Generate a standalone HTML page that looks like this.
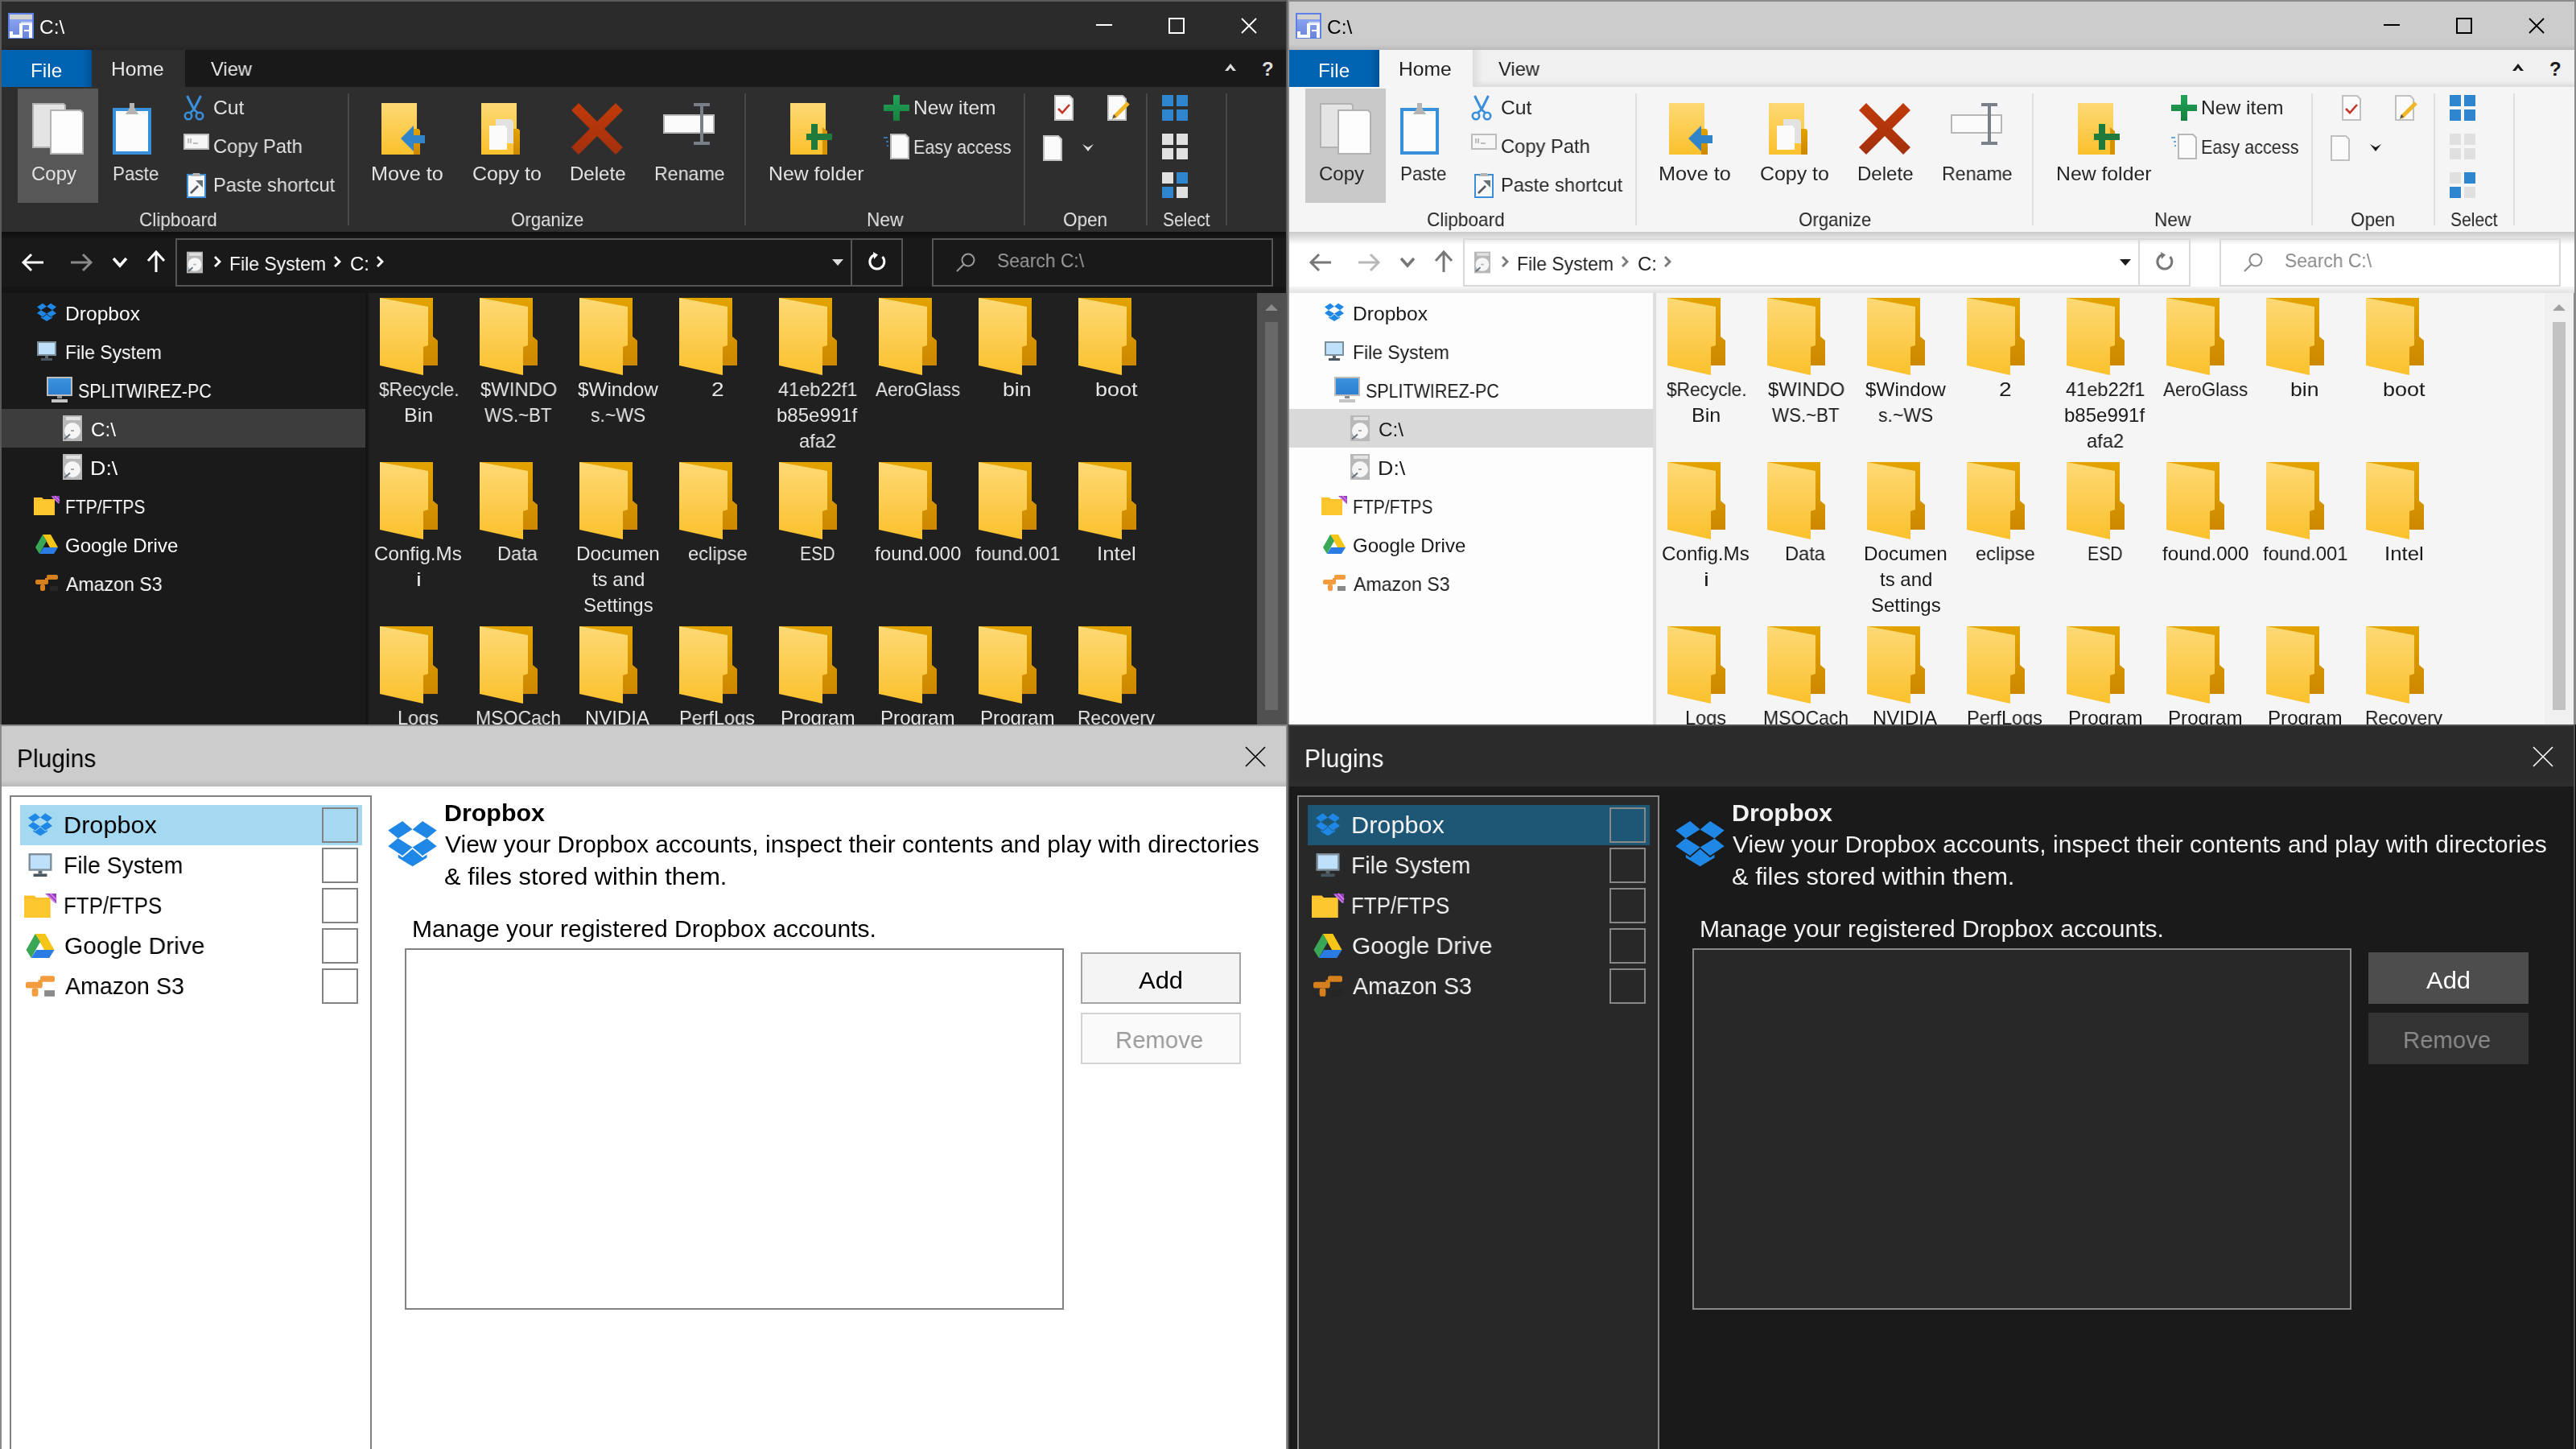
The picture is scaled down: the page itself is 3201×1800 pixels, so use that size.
<!DOCTYPE html>
<html><head><meta charset="utf-8"><style>
html,body{margin:0;padding:0;width:3201px;height:1800px;overflow:hidden;background:#000;}
body{position:relative;font-family:"Liberation Sans", sans-serif;}
svg{display:block;overflow:visible;}
div{-webkit-font-smoothing:antialiased;}
.gs{will-change:transform;}
</style></head><body>
<div style="position:absolute;left:0px;top:0;width:1600px;height:900px;overflow:hidden;background:#5a5a5a"><div style="position:absolute;left:2px;top:2px;width:1596px;height:60px;background:linear-gradient(#2b2b2b 0px, #2b2b2b 53px, #252525 60px);"></div><svg style="position:absolute;left:10px;top:16px;" width="32" height="32" viewBox="0 0 32 32"><defs><linearGradient id="g1" x1="0" y1="0" x2="0" y2="1"><stop offset="0" stop-color="#92aaf6"/><stop offset="1" stop-color="#6c86d8"/></linearGradient></defs>
<rect x="0" y="0" width="32" height="32" fill="#5c80e6"/>
<rect x="2" y="2" width="28" height="28" fill="url(#g1)"/>
<rect x="2" y="2" width="28" height="6" fill="#d0d0d0"/>
<rect x="16" y="11" width="14" height="2" fill="#c8d4f8"/>
<path d="M2 23 H6 V27 H14 V13 H30 V31 H26 V23 H20 V21 H26 V15 H18 V31 H2 Z" fill="#ffffff"/></svg><div style="position:absolute;left:48.76px;top:18.68px;font-size:24px;line-height:30px;color:#ffffff;font-weight:normal;white-space:nowrap;transform-origin:0 0;transform:scaleX(1.0187);will-change:transform;">C:\</div><div style="position:absolute;left:1362px;top:30px;width:20px;height:2px;background:#ffffff;"></div><div style="position:absolute;left:1452px;top:22px;width:16px;height:16px;border:2px solid #ffffff;background:transparent;"></div><svg style="position:absolute;left:1542px;top:22px;" width="20" height="20" viewBox="0 0 20 20"><path d="M1 1 L19 19 M19 1 L1 19" stroke="#ffffff" stroke-width="1.8"/></svg><div style="position:absolute;left:2px;top:62px;width:1596px;height:46px;background:#191919;"></div><div style="position:absolute;left:2px;top:62px;width:112px;height:46px;background:linear-gradient(90deg, #0063b1 0px, #0063b1 100px, #00519a 112px);"></div><div style="position:absolute;left:37.61px;top:72.68px;font-size:24px;line-height:30px;color:#ffffff;font-weight:normal;white-space:nowrap;transform-origin:0 0;transform:scaleX(1.0130);will-change:transform;">File</div><div style="position:absolute;left:114px;top:62px;width:116px;height:46px;background:#2e2e2e;"></div><div style="position:absolute;left:137.68px;top:70.68px;font-size:24px;line-height:30px;color:#e8e8e8;font-weight:normal;white-space:nowrap;transform-origin:0 0;transform:scaleX(1.0265);will-change:transform;">Home</div><div style="position:absolute;left:262.30px;top:70.68px;font-size:24px;line-height:30px;color:#e8e8e8;font-weight:normal;white-space:nowrap;transform-origin:0 0;transform:scaleX(0.9871);will-change:transform;">View</div><svg style="position:absolute;left:1522px;top:78px;" width="14" height="10" viewBox="0 0 14 10"><path d="M0 10 L7 1 L14 10 L10 10 L7 6 L4 10 Z" fill="#dcdcdc"/></svg><div style="position:absolute;left:1568px;top:70.68px;font-size:24px;line-height:30px;color:#dcdcdc;font-weight:bold;white-space:nowrap;">?</div><div style="position:absolute;left:2px;top:108px;width:1596px;height:180px;background:#2e2e2e;"></div><div style="position:absolute;left:22px;top:110px;width:100px;height:142px;background:#575757;"></div><svg style="position:absolute;left:40px;top:128px;" width="64" height="64" viewBox="0 0 64 64"><path d="M1 1 H39 L41 3 V55 H1 Z" fill="#e4e4e4" stroke="#b2b2b2" stroke-width="2"/>
<path d="M23 9 H60 L63 12 V63 H23 Z" fill="#fdfdfd" stroke="#b2b2b2" stroke-width="2"/></svg><svg style="position:absolute;left:140px;top:128px;" width="48" height="64" viewBox="0 0 48 64"><rect x="2" y="8" width="44" height="54" fill="#fcfcfc" stroke="#3a8fdb" stroke-width="4"/>
<path d="M16 14 L21 6 V0 H27 V6 L32 14 Z" fill="#b4b4b4"/></svg><div style="position:absolute;left:38.78px;top:200.68px;font-size:24px;line-height:30px;color:#e2e2e2;font-weight:normal;white-space:nowrap;transform-origin:0 0;transform:scaleX(1.0007);will-change:transform;">Copy</div><div style="position:absolute;left:139.56px;top:200.68px;font-size:24px;line-height:30px;color:#e2e2e2;font-weight:normal;white-space:nowrap;transform-origin:0 0;transform:scaleX(0.9360);will-change:transform;">Paste</div><svg style="position:absolute;left:228px;top:118px;" width="26" height="32" viewBox="0 0 26 32"><path d="M4.5 1 L13 18 L8.5 22 M21.5 1 L13 18 L17.5 22" stroke="#3a8fdb" stroke-width="3" fill="none" stroke-linejoin="round"/>
<circle cx="6" cy="26" r="4.2" stroke="#3a8fdb" stroke-width="2.6" fill="none"/>
<circle cx="20" cy="26" r="4.2" stroke="#3a8fdb" stroke-width="2.6" fill="none"/></svg><div style="position:absolute;left:264.75px;top:118.68px;font-size:24px;line-height:30px;color:#e2e2e2;font-weight:normal;white-space:nowrap;transform-origin:0 0;transform:scaleX(1.0291);will-change:transform;">Cut</div><svg style="position:absolute;left:228px;top:166px;" width="32" height="20" viewBox="0 0 32 20"><rect x="1" y="1" width="30" height="18" fill="#f6f6f6" stroke="#bdbdbd" stroke-width="2"/>
<path d="M6 6 V12 M9 6 V12 M12 12 H18" stroke="#aaaaaa" stroke-width="1.5"/></svg><div style="position:absolute;left:264.80px;top:166.68px;font-size:24px;line-height:30px;color:#e2e2e2;font-weight:normal;white-space:nowrap;transform-origin:0 0;transform:scaleX(0.9882);will-change:transform;">Copy Path</div><svg style="position:absolute;left:232px;top:214px;" width="24" height="32" viewBox="0 0 24 32"><rect x="1" y="3" width="22" height="28" fill="#f8f8f8" stroke="#3a8fdb" stroke-width="2"/>
<path d="M6 5 L8 1 H16 L18 5 Z" fill="#b4b4b4"/>
<path d="M5 26 L14 17" stroke="#555a60" stroke-width="2.6"/><path d="M11 10 H20 V19 Z" fill="#6a7078"/></svg><div style="position:absolute;left:265.06px;top:214.68px;font-size:24px;line-height:30px;color:#e2e2e2;font-weight:normal;white-space:nowrap;transform-origin:0 0;transform:scaleX(0.9850);will-change:transform;">Paste shortcut</div><div style="position:absolute;left:172.85px;top:257.68px;font-size:24px;line-height:30px;color:#e2e2e2;font-weight:normal;white-space:nowrap;transform-origin:0 0;transform:scaleX(0.9404);will-change:transform;">Clipboard</div><div style="position:absolute;left:432px;top:116px;width:2px;height:164px;background:#474747;"></div><div style="position:absolute;left:925px;top:116px;width:2px;height:164px;background:#474747;"></div><div style="position:absolute;left:1272px;top:116px;width:2px;height:164px;background:#474747;"></div><div style="position:absolute;left:1424px;top:116px;width:2px;height:164px;background:#474747;"></div><div style="position:absolute;left:1523px;top:116px;width:2px;height:164px;background:#474747;"></div><svg style="position:absolute;left:474px;top:128px;" width="56" height="64" viewBox="0 0 56 64"><defs><linearGradient id="g2" x1="0" y1="0" x2="0" y2="1"><stop offset="0" stop-color="#fdd975"/><stop offset="1" stop-color="#fbc12d"/></linearGradient>
<linearGradient id="g3" x1="0" y1="0" x2="0" y2="1"><stop offset="0" stop-color="#e2a200"/><stop offset="1" stop-color="#cc8800"/></linearGradient></defs>
<rect x="0" y="0" width="44" height="64" fill="url(#g2)"/>
<path d="M40 32 H46 L48 34 V64 H40 Z" fill="url(#g3)"/>
<path d="M24 44 L40 28 V40 H54 V50 H40 V60 Z" fill="#3184c8"/></svg><div style="position:absolute;left:461.33px;top:200.68px;font-size:24px;line-height:30px;color:#e2e2e2;font-weight:normal;white-space:nowrap;transform-origin:0 0;transform:scaleX(1.0510);will-change:transform;">Move to</div><svg style="position:absolute;left:598px;top:128px;" width="48" height="64" viewBox="0 0 48 64"><defs><linearGradient id="g4" x1="0" y1="0" x2="0" y2="1"><stop offset="0" stop-color="#fdd975"/><stop offset="1" stop-color="#fbc12d"/></linearGradient>
<linearGradient id="g5" x1="0" y1="0" x2="0" y2="1"><stop offset="0" stop-color="#e2a200"/><stop offset="1" stop-color="#cc8800"/></linearGradient></defs>
<rect x="0" y="0" width="44" height="64" fill="url(#g4)"/>
<path d="M40 32 H46 L48 34 V64 H40 Z" fill="url(#g5)"/>
<path d="M18 20 H37 L40 23 V50 H18 Z" fill="#e2e2e2"/>
<path d="M10 28 H29 L32 31 V58 H10 Z" fill="#fbfbfb"/></svg><div style="position:absolute;left:586.73px;top:200.68px;font-size:24px;line-height:30px;color:#e2e2e2;font-weight:normal;white-space:nowrap;transform-origin:0 0;transform:scaleX(1.0387);will-change:transform;">Copy to</div><svg style="position:absolute;left:710px;top:128px;" width="64" height="64" viewBox="0 0 64 64"><defs><linearGradient id="g6" x1="0" y1="0" x2="0" y2="1"><stop offset="0" stop-color="#c03a08"/><stop offset="1" stop-color="#a3300e"/></linearGradient></defs>
<path d="M0 9 L9 0 L32 23 L55 0 L64 9 L41 32 L64 55 L55 64 L32 41 L9 64 L0 55 L23 32 Z" fill="url(#g6)"/></svg><div style="position:absolute;left:707.53px;top:200.68px;font-size:24px;line-height:30px;color:#e2e2e2;font-weight:normal;white-space:nowrap;transform-origin:0 0;transform:scaleX(1.0024);will-change:transform;">Delete</div><svg style="position:absolute;left:824px;top:128px;" width="64" height="52" viewBox="0 0 64 52"><rect x="1" y="15" width="62" height="22" fill="#fbfbfb" stroke="#b8b8b8" stroke-width="2"/>
<path d="M38 0 H58 V4 H50 V48 H58 V52 H38 V48 H46 V4 H38 Z" fill="#7a8088"/></svg><div style="position:absolute;left:813.10px;top:200.68px;font-size:24px;line-height:30px;color:#e2e2e2;font-weight:normal;white-space:nowrap;transform-origin:0 0;transform:scaleX(0.9660);will-change:transform;">Rename</div><div style="position:absolute;left:634.65px;top:257.68px;font-size:24px;line-height:30px;color:#e2e2e2;font-weight:normal;white-space:nowrap;transform-origin:0 0;transform:scaleX(0.9277);will-change:transform;">Organize</div><svg style="position:absolute;left:982px;top:128px;" width="52" height="64" viewBox="0 0 52 64"><defs><linearGradient id="g7" x1="0" y1="0" x2="0" y2="1"><stop offset="0" stop-color="#fdd975"/><stop offset="1" stop-color="#fbc12d"/></linearGradient></defs>
<rect x="0" y="0" width="44" height="64" fill="url(#g7)"/>
<path d="M40 30 L46 35 V64 H40 Z" fill="#d89400"/>
<path d="M26 26 H34 V38 H52 V46 H34 V58 H26 V46 H20 V38 H26 Z" fill="#1f7a3c"/></svg><div style="position:absolute;left:954.97px;top:200.68px;font-size:24px;line-height:30px;color:#e2e2e2;font-weight:normal;white-space:nowrap;transform-origin:0 0;transform:scaleX(1.0325);will-change:transform;">New folder</div><svg style="position:absolute;left:1098px;top:118px;" width="32" height="32" viewBox="0 0 32 32"><defs><linearGradient id="g8" x1="0" y1="0" x2="0" y2="1"><stop offset="0" stop-color="#21a35a"/><stop offset="1" stop-color="#16803f"/></linearGradient></defs>
<path d="M12 0 H20 V12 H32 V20 H20 V32 H12 V20 H0 V12 H12 Z" fill="url(#g8)"/></svg><div style="position:absolute;left:1134.98px;top:118.68px;font-size:24px;line-height:30px;color:#e2e2e2;font-weight:normal;white-space:nowrap;transform-origin:0 0;transform:scaleX(1.0262);will-change:transform;">New item</div><svg style="position:absolute;left:1098px;top:166px;" width="32" height="32" viewBox="0 0 32 32"><path d="M9 1 H27 L31 5 V31 H9 Z" fill="#fbfbfb" stroke="#b8b8b8" stroke-width="2"/>
<path d="M0 5 H5 M3 10 H6 M4 15 H6" stroke="#3a8fdb" stroke-width="1.6"/></svg><div style="position:absolute;left:1135.22px;top:167.68px;font-size:24px;line-height:30px;color:#e2e2e2;font-weight:normal;white-space:nowrap;transform-origin:0 0;transform:scaleX(0.9023);will-change:transform;">Easy access</div><div style="position:absolute;left:1076.54px;top:257.68px;font-size:24px;line-height:30px;color:#e2e2e2;font-weight:normal;white-space:nowrap;transform-origin:0 0;transform:scaleX(0.9457);will-change:transform;">New</div><svg style="position:absolute;left:1310px;top:118px;" width="24" height="32" viewBox="0 0 24 32"><path d="M1 1 H19 L23 5 V31 H1 Z" fill="#fbfbfb" stroke="#c0c0c0" stroke-width="2"/><path d="M5 17 L10 22 L19 12" stroke="#c0392b" stroke-width="2.6" fill="none"/></svg><svg style="position:absolute;left:1376px;top:118px;" width="28" height="32" viewBox="0 0 28 32"><path d="M1 1 H19 L23 5 V31 H1 Z" fill="#fbfbfb" stroke="#c0c0c0" stroke-width="2"/>
<path d="M8 28 L26 10" stroke="#f2b62a" stroke-width="5"/><path d="M6 30 L8 24 L11 27 Z" fill="#555"/></svg><svg style="position:absolute;left:1296px;top:168px;" width="24" height="32" viewBox="0 0 24 32"><path d="M1 1 H19 L23 5 V31 H1 Z" fill="#fbfbfb" stroke="#c0c0c0" stroke-width="2"/></svg><svg style="position:absolute;left:1345px;top:179px;" width="14" height="9" viewBox="0 0 14 9"><path d="M0 0 L7 4 L14 0 L7 9 Z" fill="#dcdcdc"/></svg><div style="position:absolute;left:1320.93px;top:257.68px;font-size:24px;line-height:30px;color:#e2e2e2;font-weight:normal;white-space:nowrap;transform-origin:0 0;transform:scaleX(0.9390);will-change:transform;">Open</div><svg style="position:absolute;left:1444px;top:118px;" width="32" height="32" viewBox="0 0 32 32"><rect x="0" y="0" width="14" height="14" fill="#2f86cf"/><rect x="18" y="0" width="14" height="14" fill="#2f86cf"/><rect x="0" y="18" width="14" height="14" fill="#2f86cf"/><rect x="18" y="18" width="14" height="14" fill="#2f86cf"/></svg><svg style="position:absolute;left:1444px;top:166px;" width="32" height="32" viewBox="0 0 32 32"><rect x="0" y="0" width="14" height="14" fill="#e0e0e0"/><rect x="18" y="0" width="14" height="14" fill="#e0e0e0"/><rect x="0" y="18" width="14" height="14" fill="#e0e0e0"/><rect x="18" y="18" width="14" height="14" fill="#e0e0e0"/></svg><svg style="position:absolute;left:1444px;top:214px;" width="32" height="32" viewBox="0 0 32 32"><rect x="0" y="0" width="14" height="14" fill="#e0e0e0"/><rect x="18" y="0" width="14" height="14" fill="#2f86cf"/><rect x="0" y="18" width="14" height="14" fill="#2f86cf"/><rect x="18" y="18" width="14" height="14" fill="#e0e0e0"/></svg><div style="position:absolute;left:1445.04px;top:257.68px;font-size:24px;line-height:30px;color:#e2e2e2;font-weight:normal;white-space:nowrap;transform-origin:0 0;transform:scaleX(0.8772);will-change:transform;">Select</div><div style="position:absolute;left:2px;top:288px;width:1596px;height:76px;background:#191919;"></div><div style="position:absolute;left:2px;top:356px;width:1596px;height:8px;background:#151515;"></div><div style="position:absolute;left:2px;top:288px;width:1596px;height:8px;background:linear-gradient(#0e0e0e, #161616);"></div><svg style="position:absolute;left:27px;top:314px;" width="28" height="24" viewBox="0 0 28 24"><path d="M27 12 H3 M12 2 L2 12 L12 22" stroke="#ffffff" stroke-width="3" fill="none"/></svg><svg style="position:absolute;left:87px;top:314px;" width="28" height="24" viewBox="0 0 28 24"><path d="M1 12 H25 M16 2 L26 12 L16 22" stroke="#8a8a8a" stroke-width="3" fill="none"/></svg><svg style="position:absolute;left:140px;top:320px;" width="18" height="12" viewBox="0 0 18 12"><path d="M1 1 L9 10 L17 1" stroke="#ffffff" stroke-width="3.5" fill="none"/></svg><svg style="position:absolute;left:182px;top:311px;" width="24" height="27" viewBox="0 0 24 27"><path d="M12 27 V3 M2 13 L12 2 L22 13" stroke="#ffffff" stroke-width="3" fill="none"/></svg><div style="position:absolute;left:218px;top:296px;width:900px;height:56px;border:2px solid #555555;background:transparent;"></div><div style="position:absolute;left:1057px;top:298px;width:2px;height:56px;background:#555555;"></div><svg style="position:absolute;left:232px;top:312px;" width="20" height="28" viewBox="0 0 24 32"><rect x="0" y="0" width="24" height="32" fill="#b8b8b8"/>
<rect x="4" y="2" width="18" height="4" fill="#e2e2e2"/>
<circle cx="12" cy="19" r="10" fill="#f6f6f6"/>
<rect x="10" y="18" width="4" height="2" fill="#aaaaaa"/>
<path d="M2 29.5 L9 23.5" stroke="#66707c" stroke-width="2"/></svg><svg style="position:absolute;left:266px;top:318px;" width="10" height="14" viewBox="0 0 10 14"><path d="M0 2 L2 0 L9 7 L2 14 L0 12 L5 7 Z" fill="#ffffff"/></svg><div style="position:absolute;left:285.11px;top:312.68px;font-size:24px;line-height:30px;color:#ffffff;font-weight:normal;white-space:nowrap;transform-origin:0 0;transform:scaleX(0.9581);will-change:transform;">File System</div><svg style="position:absolute;left:415px;top:318px;" width="10" height="14" viewBox="0 0 10 14"><path d="M0 2 L2 0 L9 7 L2 14 L0 12 L5 7 Z" fill="#ffffff"/></svg><div style="position:absolute;left:434.50px;top:312.68px;font-size:24px;line-height:30px;color:#ffffff;font-weight:normal;white-space:nowrap;transform-origin:0 0;transform:scaleX(0.9859);will-change:transform;">C:</div><svg style="position:absolute;left:468px;top:318px;" width="10" height="14" viewBox="0 0 10 14"><path d="M0 2 L2 0 L9 7 L2 14 L0 12 L5 7 Z" fill="#ffffff"/></svg><svg style="position:absolute;left:1034px;top:322px;" width="14" height="8" viewBox="0 0 14 8"><path d="M0 0 H14 L7 8 Z" fill="#dcdcdc"/></svg><svg style="position:absolute;left:1078px;top:313px;" width="24" height="24" viewBox="0 0 24 24"><path d="M18.5 6 A9 9 0 1 1 9 3.5" stroke="#ffffff" stroke-width="3" fill="none"/><path d="M7 0 L13 3.5 L8 9 Z" fill="#ffffff"/></svg><div style="position:absolute;left:1158px;top:296px;width:420px;height:56px;border:2px solid #555555;background:transparent;"></div><svg style="position:absolute;left:1188px;top:314px;" width="24" height="24" viewBox="0 0 24 24"><circle cx="15" cy="9" r="7.5" stroke="#9a9a9a" stroke-width="2" fill="none"/><path d="M1 23 L10 14" stroke="#9a9a9a" stroke-width="2"/></svg><div style="position:absolute;left:1238.96px;top:308.68px;font-size:24px;line-height:30px;color:#9a9a9a;font-weight:normal;white-space:nowrap;transform-origin:0 0;transform:scaleX(0.9529);will-change:transform;">Search C:\</div><div style="position:absolute;left:2px;top:364px;width:452px;height:536px;background:#1a1a1a;"></div><div style="position:absolute;left:454px;top:364px;width:4px;height:536px;background:#151515;"></div><div style="position:absolute;left:2px;top:508px;width:452px;height:48px;background:#3d3d3d;"></div><svg style="position:absolute;left:46px;top:376px;" width="24" height="24" viewBox="0 0 42.4 40"><g fill="#1f88e6"><path d="M12.5 0L0 8.1l8.7 7L21.2 7.2z"/><path d="M0 21.9l12.5 8.2 8.7-7.3-12.6-7.8z"/>
<path d="M21.2 22.8l8.8 7.3 12.4-8.1-8.6-6.9z"/><path d="M42.4 8.1L30 0l-8.8 7.3 12.6 7.8z"/>
<path d="M21.3 24.4l-8.8 7.3-3.7-2.5v2.8l12.5 7.5 12.5-7.5v-2.8l-3.8 2.5z"/></g></svg><div style="position:absolute;left:81.28px;top:374.68px;font-size:24px;line-height:30px;color:#ffffff;font-weight:normal;white-space:nowrap;transform-origin:0 0;transform:scaleX(1.0250);will-change:transform;">Dropbox</div><svg style="position:absolute;left:46px;top:424px;" width="24" height="24" viewBox="0 0 24 24"><rect x="1" y="1" width="22" height="16" fill="#bfe0fb" stroke="#7e8f9c" stroke-width="2"/>
<rect x="10" y="18" width="4" height="3" fill="#58656e"/><rect x="5" y="21" width="14" height="3" fill="#4a565e"/></svg><div style="position:absolute;left:81.42px;top:422.68px;font-size:24px;line-height:30px;color:#ffffff;font-weight:normal;white-space:nowrap;transform-origin:0 0;transform:scaleX(0.9564);will-change:transform;">File System</div><svg style="position:absolute;left:58px;top:468px;" width="32" height="32" viewBox="0 0 32 32"><defs><linearGradient id="g9" x1="0" y1="0" x2="0" y2="1"><stop offset="0" stop-color="#3d93de"/><stop offset="1" stop-color="#2c7fcf"/></linearGradient></defs>
<rect x="1" y="1" width="30" height="22" fill="url(#g9)" stroke="#bdbdbd" stroke-width="2"/>
<rect x="13" y="24" width="6" height="3" fill="#8a9096"/><rect x="6" y="28" width="20" height="4" fill="#c4c4c4"/></svg><div style="position:absolute;left:96.93px;top:470.68px;font-size:24px;line-height:30px;color:#ffffff;font-weight:normal;white-space:nowrap;transform-origin:0 0;transform:scaleX(0.8945);will-change:transform;">SPLITWIREZ-PC</div><svg style="position:absolute;left:78px;top:516px;" width="24" height="32" viewBox="0 0 24 32"><rect x="0" y="0" width="24" height="32" fill="#b8b8b8"/>
<rect x="4" y="2" width="18" height="4" fill="#e2e2e2"/>
<circle cx="12" cy="19" r="10" fill="#f6f6f6"/>
<rect x="10" y="18" width="4" height="2" fill="#aaaaaa"/>
<path d="M2 29.5 L9 23.5" stroke="#66707c" stroke-width="2"/></svg><div style="position:absolute;left:113.17px;top:518.68px;font-size:24px;line-height:30px;color:#ffffff;font-weight:normal;white-space:nowrap;transform-origin:0 0;transform:scaleX(1.0119);will-change:transform;">C:\</div><svg style="position:absolute;left:78px;top:564px;" width="24" height="32" viewBox="0 0 24 32"><rect x="0" y="0" width="24" height="32" fill="#b8b8b8"/>
<rect x="4" y="2" width="18" height="4" fill="#e2e2e2"/>
<circle cx="12" cy="19" r="10" fill="#f6f6f6"/>
<rect x="10" y="18" width="4" height="2" fill="#aaaaaa"/>
<path d="M2 29.5 L9 23.5" stroke="#66707c" stroke-width="2"/></svg><div style="position:absolute;left:111.70px;top:566.68px;font-size:24px;line-height:30px;color:#ffffff;font-weight:normal;white-space:nowrap;transform-origin:0 0;transform:scaleX(1.1185);will-change:transform;">D:\</div><svg style="position:absolute;left:42px;top:616px;" width="32" height="24" viewBox="0 0 32 24"><path d="M0 2 H10 L12 4 H26 V24 H0 Z" fill="#fbc12d"/>
<path d="M0 6 H26 V24 H0 Z" fill="#fdc72f"/>
<path d="M21 0 H32 V10 Z" fill="#8e3fb8"/><path d="M23 1 L31 9 M26 0 L32 6" stroke="#d07be8" stroke-width="1.5"/></svg><div style="position:absolute;left:81.27px;top:614.68px;font-size:24px;line-height:30px;color:#ffffff;font-weight:normal;white-space:nowrap;transform-origin:0 0;transform:scaleX(0.8779);will-change:transform;">FTP/FTPS</div><svg style="position:absolute;left:44px;top:664px;" width="28" height="24" viewBox="0 0 28 24"><path d="M9 0 H19 L28 16 H18 Z" fill="#f5c518"/>
<path d="M9 0 L14 8 L5 24 L0 16 Z" fill="#3aa757"/>
<path d="M5 24 L10 16 H28 L23 24 Z" fill="#2a7be4"/></svg><div style="position:absolute;left:80.79px;top:662.68px;font-size:24px;line-height:30px;color:#ffffff;font-weight:normal;white-space:nowrap;transform-origin:0 0;transform:scaleX(1.0015);will-change:transform;">Google Drive</div><svg style="position:absolute;left:44px;top:714px;" width="28" height="20" viewBox="0 0 28 20"><g fill="#d5801c"><rect x="14" y="0" width="14" height="6" rx="2"/><rect x="0" y="6" width="16" height="6" rx="2"/>
<rect x="6" y="12" width="6" height="8" rx="2"/><rect x="12" y="4" width="4" height="6"/></g>
<rect x="18" y="14" width="10" height="6" fill="#252525"/></svg><div style="position:absolute;left:81.95px;top:710.68px;font-size:24px;line-height:30px;color:#ffffff;font-weight:normal;white-space:nowrap;transform-origin:0 0;transform:scaleX(0.9637);will-change:transform;">Amazon S3</div><div style="position:absolute;left:458px;top:364px;width:1104px;height:536px;background:#202020;"></div><svg style="position:absolute;left:472px;top:370px;" width="72" height="96" viewBox="0 0 72 96"><defs><linearGradient id="g10" x1="0" y1="0" x2="0" y2="1"><stop offset="0" stop-color="#fdd975"/><stop offset="1" stop-color="#fbc12d"/></linearGradient>
<linearGradient id="g11" x1="0" y1="0" x2="0" y2="1"><stop offset="0" stop-color="#e3a400"/><stop offset="1" stop-color="#cc8800"/></linearGradient></defs>
<path d="M0 0 H66 V48 L72 53 V84 H0 Z" fill="url(#g11)"/>
<path d="M0 0 L60 11 V59 L54 61 V96 L0 84 Z" fill="url(#g10)"/></svg><div style="position:absolute;left:471.16px;top:468.68px;font-size:24px;line-height:30px;color:#e6e6e6;font-weight:normal;white-space:nowrap;transform-origin:0 0;transform:scaleX(0.9444);will-change:transform;">$Recycle.</div><div style="position:absolute;left:501.64px;top:500.68px;font-size:24px;line-height:30px;color:#e6e6e6;font-weight:normal;white-space:nowrap;transform-origin:0 0;transform:scaleX(1.0462);will-change:transform;">Bin</div><svg style="position:absolute;left:596px;top:370px;" width="72" height="96" viewBox="0 0 72 96"><defs><linearGradient id="g12" x1="0" y1="0" x2="0" y2="1"><stop offset="0" stop-color="#fdd975"/><stop offset="1" stop-color="#fbc12d"/></linearGradient>
<linearGradient id="g13" x1="0" y1="0" x2="0" y2="1"><stop offset="0" stop-color="#e3a400"/><stop offset="1" stop-color="#cc8800"/></linearGradient></defs>
<path d="M0 0 H66 V48 L72 53 V84 H0 Z" fill="url(#g13)"/>
<path d="M0 0 L60 11 V59 L54 61 V96 L0 84 Z" fill="url(#g12)"/></svg><div style="position:absolute;left:596.74px;top:468.68px;font-size:24px;line-height:30px;color:#e6e6e6;font-weight:normal;white-space:nowrap;transform-origin:0 0;transform:scaleX(0.9937);will-change:transform;">$WINDO</div><div style="position:absolute;left:602.40px;top:500.68px;font-size:24px;line-height:30px;color:#e6e6e6;font-weight:normal;white-space:nowrap;transform-origin:0 0;transform:scaleX(0.9289);will-change:transform;">WS.~BT</div><svg style="position:absolute;left:720px;top:370px;" width="72" height="96" viewBox="0 0 72 96"><defs><linearGradient id="g14" x1="0" y1="0" x2="0" y2="1"><stop offset="0" stop-color="#fdd975"/><stop offset="1" stop-color="#fbc12d"/></linearGradient>
<linearGradient id="g15" x1="0" y1="0" x2="0" y2="1"><stop offset="0" stop-color="#e3a400"/><stop offset="1" stop-color="#cc8800"/></linearGradient></defs>
<path d="M0 0 H66 V48 L72 53 V84 H0 Z" fill="url(#g15)"/>
<path d="M0 0 L60 11 V59 L54 61 V96 L0 84 Z" fill="url(#g14)"/></svg><div style="position:absolute;left:717.89px;top:468.68px;font-size:24px;line-height:30px;color:#e6e6e6;font-weight:normal;white-space:nowrap;transform-origin:0 0;transform:scaleX(1.0121);will-change:transform;">$Window</div><div style="position:absolute;left:734.06px;top:500.68px;font-size:24px;line-height:30px;color:#e6e6e6;font-weight:normal;white-space:nowrap;transform-origin:0 0;transform:scaleX(0.9573);will-change:transform;">s.~WS</div><svg style="position:absolute;left:844px;top:370px;" width="72" height="96" viewBox="0 0 72 96"><defs><linearGradient id="g16" x1="0" y1="0" x2="0" y2="1"><stop offset="0" stop-color="#fdd975"/><stop offset="1" stop-color="#fbc12d"/></linearGradient>
<linearGradient id="g17" x1="0" y1="0" x2="0" y2="1"><stop offset="0" stop-color="#e3a400"/><stop offset="1" stop-color="#cc8800"/></linearGradient></defs>
<path d="M0 0 H66 V48 L72 53 V84 H0 Z" fill="url(#g17)"/>
<path d="M0 0 L60 11 V59 L54 61 V96 L0 84 Z" fill="url(#g16)"/></svg><div style="position:absolute;left:884.19px;top:468.68px;font-size:24px;line-height:30px;color:#e6e6e6;font-weight:normal;white-space:nowrap;transform-origin:0 0;transform:scaleX(1.1707);will-change:transform;">2</div><svg style="position:absolute;left:968px;top:370px;" width="72" height="96" viewBox="0 0 72 96"><defs><linearGradient id="g18" x1="0" y1="0" x2="0" y2="1"><stop offset="0" stop-color="#fdd975"/><stop offset="1" stop-color="#fbc12d"/></linearGradient>
<linearGradient id="g19" x1="0" y1="0" x2="0" y2="1"><stop offset="0" stop-color="#e3a400"/><stop offset="1" stop-color="#cc8800"/></linearGradient></defs>
<path d="M0 0 H66 V48 L72 53 V84 H0 Z" fill="url(#g19)"/>
<path d="M0 0 L60 11 V59 L54 61 V96 L0 84 Z" fill="url(#g18)"/></svg><div style="position:absolute;left:967.11px;top:468.68px;font-size:24px;line-height:30px;color:#e6e6e6;font-weight:normal;white-space:nowrap;transform-origin:0 0;transform:scaleX(0.9829);will-change:transform;">41eb22f1</div><div style="position:absolute;left:965.20px;top:500.68px;font-size:24px;line-height:30px;color:#e6e6e6;font-weight:normal;white-space:nowrap;transform-origin:0 0;transform:scaleX(0.9991);will-change:transform;">b85e991f</div><div style="position:absolute;left:992.99px;top:532.68px;font-size:24px;line-height:30px;color:#e6e6e6;font-weight:normal;white-space:nowrap;transform-origin:0 0;transform:scaleX(0.9891);will-change:transform;">afa2</div><svg style="position:absolute;left:1092px;top:370px;" width="72" height="96" viewBox="0 0 72 96"><defs><linearGradient id="g20" x1="0" y1="0" x2="0" y2="1"><stop offset="0" stop-color="#fdd975"/><stop offset="1" stop-color="#fbc12d"/></linearGradient>
<linearGradient id="g21" x1="0" y1="0" x2="0" y2="1"><stop offset="0" stop-color="#e3a400"/><stop offset="1" stop-color="#cc8800"/></linearGradient></defs>
<path d="M0 0 H66 V48 L72 53 V84 H0 Z" fill="url(#g21)"/>
<path d="M0 0 L60 11 V59 L54 61 V96 L0 84 Z" fill="url(#g20)"/></svg><div style="position:absolute;left:1087.76px;top:468.68px;font-size:24px;line-height:30px;color:#e6e6e6;font-weight:normal;white-space:nowrap;transform-origin:0 0;transform:scaleX(0.9394);will-change:transform;">AeroGlass</div><svg style="position:absolute;left:1216px;top:370px;" width="72" height="96" viewBox="0 0 72 96"><defs><linearGradient id="g22" x1="0" y1="0" x2="0" y2="1"><stop offset="0" stop-color="#fdd975"/><stop offset="1" stop-color="#fbc12d"/></linearGradient>
<linearGradient id="g23" x1="0" y1="0" x2="0" y2="1"><stop offset="0" stop-color="#e3a400"/><stop offset="1" stop-color="#cc8800"/></linearGradient></defs>
<path d="M0 0 H66 V48 L72 53 V84 H0 Z" fill="url(#g23)"/>
<path d="M0 0 L60 11 V59 L54 61 V96 L0 84 Z" fill="url(#g22)"/></svg><div style="position:absolute;left:1246.29px;top:468.68px;font-size:24px;line-height:30px;color:#e6e6e6;font-weight:normal;white-space:nowrap;transform-origin:0 0;transform:scaleX(1.1064);will-change:transform;">bin</div><svg style="position:absolute;left:1340px;top:370px;" width="72" height="96" viewBox="0 0 72 96"><defs><linearGradient id="g24" x1="0" y1="0" x2="0" y2="1"><stop offset="0" stop-color="#fdd975"/><stop offset="1" stop-color="#fbc12d"/></linearGradient>
<linearGradient id="g25" x1="0" y1="0" x2="0" y2="1"><stop offset="0" stop-color="#e3a400"/><stop offset="1" stop-color="#cc8800"/></linearGradient></defs>
<path d="M0 0 H66 V48 L72 53 V84 H0 Z" fill="url(#g25)"/>
<path d="M0 0 L60 11 V59 L54 61 V96 L0 84 Z" fill="url(#g24)"/></svg><div style="position:absolute;left:1361.01px;top:468.68px;font-size:24px;line-height:30px;color:#e6e6e6;font-weight:normal;white-space:nowrap;transform-origin:0 0;transform:scaleX(1.1225);will-change:transform;">boot</div><svg style="position:absolute;left:472px;top:574px;" width="72" height="96" viewBox="0 0 72 96"><defs><linearGradient id="g26" x1="0" y1="0" x2="0" y2="1"><stop offset="0" stop-color="#fdd975"/><stop offset="1" stop-color="#fbc12d"/></linearGradient>
<linearGradient id="g27" x1="0" y1="0" x2="0" y2="1"><stop offset="0" stop-color="#e3a400"/><stop offset="1" stop-color="#cc8800"/></linearGradient></defs>
<path d="M0 0 H66 V48 L72 53 V84 H0 Z" fill="url(#g27)"/>
<path d="M0 0 L60 11 V59 L54 61 V96 L0 84 Z" fill="url(#g26)"/></svg><div style="position:absolute;left:465.42px;top:672.68px;font-size:24px;line-height:30px;color:#e6e6e6;font-weight:normal;white-space:nowrap;transform-origin:0 0;transform:scaleX(1.0071);will-change:transform;">Config.Ms</div><div style="position:absolute;left:516.59px;top:704.68px;font-size:24px;line-height:30px;color:#e6e6e6;font-weight:normal;white-space:nowrap;transform-origin:0 0;transform:scaleX(1.2800);will-change:transform;">i</div><svg style="position:absolute;left:596px;top:574px;" width="72" height="96" viewBox="0 0 72 96"><defs><linearGradient id="g28" x1="0" y1="0" x2="0" y2="1"><stop offset="0" stop-color="#fdd975"/><stop offset="1" stop-color="#fbc12d"/></linearGradient>
<linearGradient id="g29" x1="0" y1="0" x2="0" y2="1"><stop offset="0" stop-color="#e3a400"/><stop offset="1" stop-color="#cc8800"/></linearGradient></defs>
<path d="M0 0 H66 V48 L72 53 V84 H0 Z" fill="url(#g29)"/>
<path d="M0 0 L60 11 V59 L54 61 V96 L0 84 Z" fill="url(#g28)"/></svg><div style="position:absolute;left:618.06px;top:672.68px;font-size:24px;line-height:30px;color:#e6e6e6;font-weight:normal;white-space:nowrap;transform-origin:0 0;transform:scaleX(0.9851);will-change:transform;">Data</div><svg style="position:absolute;left:720px;top:574px;" width="72" height="96" viewBox="0 0 72 96"><defs><linearGradient id="g30" x1="0" y1="0" x2="0" y2="1"><stop offset="0" stop-color="#fdd975"/><stop offset="1" stop-color="#fbc12d"/></linearGradient>
<linearGradient id="g31" x1="0" y1="0" x2="0" y2="1"><stop offset="0" stop-color="#e3a400"/><stop offset="1" stop-color="#cc8800"/></linearGradient></defs>
<path d="M0 0 H66 V48 L72 53 V84 H0 Z" fill="url(#g31)"/>
<path d="M0 0 L60 11 V59 L54 61 V96 L0 84 Z" fill="url(#g30)"/></svg><div style="position:absolute;left:715.86px;top:672.68px;font-size:24px;line-height:30px;color:#e6e6e6;font-weight:normal;white-space:nowrap;transform-origin:0 0;transform:scaleX(1.0112);will-change:transform;">Documen</div><div style="position:absolute;left:735.89px;top:704.68px;font-size:24px;line-height:30px;color:#e6e6e6;font-weight:normal;white-space:nowrap;transform-origin:0 0;transform:scaleX(1.0005);will-change:transform;">ts and</div><div style="position:absolute;left:724.71px;top:736.68px;font-size:24px;line-height:30px;color:#e6e6e6;font-weight:normal;white-space:nowrap;transform-origin:0 0;transform:scaleX(0.9957);will-change:transform;">Settings</div><svg style="position:absolute;left:844px;top:574px;" width="72" height="96" viewBox="0 0 72 96"><defs><linearGradient id="g32" x1="0" y1="0" x2="0" y2="1"><stop offset="0" stop-color="#fdd975"/><stop offset="1" stop-color="#fbc12d"/></linearGradient>
<linearGradient id="g33" x1="0" y1="0" x2="0" y2="1"><stop offset="0" stop-color="#e3a400"/><stop offset="1" stop-color="#cc8800"/></linearGradient></defs>
<path d="M0 0 H66 V48 L72 53 V84 H0 Z" fill="url(#g33)"/>
<path d="M0 0 L60 11 V59 L54 61 V96 L0 84 Z" fill="url(#g32)"/></svg><div style="position:absolute;left:855.09px;top:672.68px;font-size:24px;line-height:30px;color:#e6e6e6;font-weight:normal;white-space:nowrap;transform-origin:0 0;transform:scaleX(0.9887);will-change:transform;">eclipse</div><svg style="position:absolute;left:968px;top:574px;" width="72" height="96" viewBox="0 0 72 96"><defs><linearGradient id="g34" x1="0" y1="0" x2="0" y2="1"><stop offset="0" stop-color="#fdd975"/><stop offset="1" stop-color="#fbc12d"/></linearGradient>
<linearGradient id="g35" x1="0" y1="0" x2="0" y2="1"><stop offset="0" stop-color="#e3a400"/><stop offset="1" stop-color="#cc8800"/></linearGradient></defs>
<path d="M0 0 H66 V48 L72 53 V84 H0 Z" fill="url(#g35)"/>
<path d="M0 0 L60 11 V59 L54 61 V96 L0 84 Z" fill="url(#g34)"/></svg><div style="position:absolute;left:993.86px;top:672.68px;font-size:24px;line-height:30px;color:#e6e6e6;font-weight:normal;white-space:nowrap;transform-origin:0 0;transform:scaleX(0.8825);will-change:transform;">ESD</div><svg style="position:absolute;left:1092px;top:574px;" width="72" height="96" viewBox="0 0 72 96"><defs><linearGradient id="g36" x1="0" y1="0" x2="0" y2="1"><stop offset="0" stop-color="#fdd975"/><stop offset="1" stop-color="#fbc12d"/></linearGradient>
<linearGradient id="g37" x1="0" y1="0" x2="0" y2="1"><stop offset="0" stop-color="#e3a400"/><stop offset="1" stop-color="#cc8800"/></linearGradient></defs>
<path d="M0 0 H66 V48 L72 53 V84 H0 Z" fill="url(#g37)"/>
<path d="M0 0 L60 11 V59 L54 61 V96 L0 84 Z" fill="url(#g36)"/></svg><div style="position:absolute;left:1086.56px;top:672.68px;font-size:24px;line-height:30px;color:#e6e6e6;font-weight:normal;white-space:nowrap;transform-origin:0 0;transform:scaleX(1.0067);will-change:transform;">found.000</div><svg style="position:absolute;left:1216px;top:574px;" width="72" height="96" viewBox="0 0 72 96"><defs><linearGradient id="g38" x1="0" y1="0" x2="0" y2="1"><stop offset="0" stop-color="#fdd975"/><stop offset="1" stop-color="#fbc12d"/></linearGradient>
<linearGradient id="g39" x1="0" y1="0" x2="0" y2="1"><stop offset="0" stop-color="#e3a400"/><stop offset="1" stop-color="#cc8800"/></linearGradient></defs>
<path d="M0 0 H66 V48 L72 53 V84 H0 Z" fill="url(#g39)"/>
<path d="M0 0 L60 11 V59 L54 61 V96 L0 84 Z" fill="url(#g38)"/></svg><div style="position:absolute;left:1211.71px;top:672.68px;font-size:24px;line-height:30px;color:#e6e6e6;font-weight:normal;white-space:nowrap;transform-origin:0 0;transform:scaleX(0.9871);will-change:transform;">found.001</div><svg style="position:absolute;left:1340px;top:574px;" width="72" height="96" viewBox="0 0 72 96"><defs><linearGradient id="g40" x1="0" y1="0" x2="0" y2="1"><stop offset="0" stop-color="#fdd975"/><stop offset="1" stop-color="#fbc12d"/></linearGradient>
<linearGradient id="g41" x1="0" y1="0" x2="0" y2="1"><stop offset="0" stop-color="#e3a400"/><stop offset="1" stop-color="#cc8800"/></linearGradient></defs>
<path d="M0 0 H66 V48 L72 53 V84 H0 Z" fill="url(#g41)"/>
<path d="M0 0 L60 11 V59 L54 61 V96 L0 84 Z" fill="url(#g40)"/></svg><div style="position:absolute;left:1363.32px;top:672.68px;font-size:24px;line-height:30px;color:#e6e6e6;font-weight:normal;white-space:nowrap;transform-origin:0 0;transform:scaleX(1.0736);will-change:transform;">Intel</div><svg style="position:absolute;left:472px;top:778px;" width="72" height="96" viewBox="0 0 72 96"><defs><linearGradient id="g42" x1="0" y1="0" x2="0" y2="1"><stop offset="0" stop-color="#fdd975"/><stop offset="1" stop-color="#fbc12d"/></linearGradient>
<linearGradient id="g43" x1="0" y1="0" x2="0" y2="1"><stop offset="0" stop-color="#e3a400"/><stop offset="1" stop-color="#cc8800"/></linearGradient></defs>
<path d="M0 0 H66 V48 L72 53 V84 H0 Z" fill="url(#g43)"/>
<path d="M0 0 L60 11 V59 L54 61 V96 L0 84 Z" fill="url(#g42)"/></svg><div style="position:absolute;left:493.92px;top:876.68px;font-size:24px;line-height:30px;color:#e6e6e6;font-weight:normal;white-space:nowrap;transform-origin:0 0;transform:scaleX(0.9816);will-change:transform;">Logs</div><svg style="position:absolute;left:596px;top:778px;" width="72" height="96" viewBox="0 0 72 96"><defs><linearGradient id="g44" x1="0" y1="0" x2="0" y2="1"><stop offset="0" stop-color="#fdd975"/><stop offset="1" stop-color="#fbc12d"/></linearGradient>
<linearGradient id="g45" x1="0" y1="0" x2="0" y2="1"><stop offset="0" stop-color="#e3a400"/><stop offset="1" stop-color="#cc8800"/></linearGradient></defs>
<path d="M0 0 H66 V48 L72 53 V84 H0 Z" fill="url(#g45)"/>
<path d="M0 0 L60 11 V59 L54 61 V96 L0 84 Z" fill="url(#g44)"/></svg><div style="position:absolute;left:590.71px;top:876.68px;font-size:24px;line-height:30px;color:#e6e6e6;font-weight:normal;white-space:nowrap;transform-origin:0 0;transform:scaleX(0.9592);will-change:transform;">MSOCach</div><svg style="position:absolute;left:720px;top:778px;" width="72" height="96" viewBox="0 0 72 96"><defs><linearGradient id="g46" x1="0" y1="0" x2="0" y2="1"><stop offset="0" stop-color="#fdd975"/><stop offset="1" stop-color="#fbc12d"/></linearGradient>
<linearGradient id="g47" x1="0" y1="0" x2="0" y2="1"><stop offset="0" stop-color="#e3a400"/><stop offset="1" stop-color="#cc8800"/></linearGradient></defs>
<path d="M0 0 H66 V48 L72 53 V84 H0 Z" fill="url(#g47)"/>
<path d="M0 0 L60 11 V59 L54 61 V96 L0 84 Z" fill="url(#g46)"/></svg><div style="position:absolute;left:727.24px;top:876.68px;font-size:24px;line-height:30px;color:#e6e6e6;font-weight:normal;white-space:nowrap;transform-origin:0 0;transform:scaleX(0.9949);will-change:transform;">NVIDIA</div><svg style="position:absolute;left:844px;top:778px;" width="72" height="96" viewBox="0 0 72 96"><defs><linearGradient id="g48" x1="0" y1="0" x2="0" y2="1"><stop offset="0" stop-color="#fdd975"/><stop offset="1" stop-color="#fbc12d"/></linearGradient>
<linearGradient id="g49" x1="0" y1="0" x2="0" y2="1"><stop offset="0" stop-color="#e3a400"/><stop offset="1" stop-color="#cc8800"/></linearGradient></defs>
<path d="M0 0 H66 V48 L72 53 V84 H0 Z" fill="url(#g49)"/>
<path d="M0 0 L60 11 V59 L54 61 V96 L0 84 Z" fill="url(#g48)"/></svg><div style="position:absolute;left:844.47px;top:876.68px;font-size:24px;line-height:30px;color:#e6e6e6;font-weight:normal;white-space:nowrap;transform-origin:0 0;transform:scaleX(0.9783);will-change:transform;">PerfLogs</div><svg style="position:absolute;left:968px;top:778px;" width="72" height="96" viewBox="0 0 72 96"><defs><linearGradient id="g50" x1="0" y1="0" x2="0" y2="1"><stop offset="0" stop-color="#fdd975"/><stop offset="1" stop-color="#fbc12d"/></linearGradient>
<linearGradient id="g51" x1="0" y1="0" x2="0" y2="1"><stop offset="0" stop-color="#e3a400"/><stop offset="1" stop-color="#cc8800"/></linearGradient></defs>
<path d="M0 0 H66 V48 L72 53 V84 H0 Z" fill="url(#g51)"/>
<path d="M0 0 L60 11 V59 L54 61 V96 L0 84 Z" fill="url(#g50)"/></svg><div style="position:absolute;left:969.52px;top:876.68px;font-size:24px;line-height:30px;color:#e6e6e6;font-weight:normal;white-space:nowrap;transform-origin:0 0;transform:scaleX(1.0059);will-change:transform;">Program</div><svg style="position:absolute;left:1092px;top:778px;" width="72" height="96" viewBox="0 0 72 96"><defs><linearGradient id="g52" x1="0" y1="0" x2="0" y2="1"><stop offset="0" stop-color="#fdd975"/><stop offset="1" stop-color="#fbc12d"/></linearGradient>
<linearGradient id="g53" x1="0" y1="0" x2="0" y2="1"><stop offset="0" stop-color="#e3a400"/><stop offset="1" stop-color="#cc8800"/></linearGradient></defs>
<path d="M0 0 H66 V48 L72 53 V84 H0 Z" fill="url(#g53)"/>
<path d="M0 0 L60 11 V59 L54 61 V96 L0 84 Z" fill="url(#g52)"/></svg><div style="position:absolute;left:1093.52px;top:876.68px;font-size:24px;line-height:30px;color:#e6e6e6;font-weight:normal;white-space:nowrap;transform-origin:0 0;transform:scaleX(1.0059);will-change:transform;">Program</div><svg style="position:absolute;left:1216px;top:778px;" width="72" height="96" viewBox="0 0 72 96"><defs><linearGradient id="g54" x1="0" y1="0" x2="0" y2="1"><stop offset="0" stop-color="#fdd975"/><stop offset="1" stop-color="#fbc12d"/></linearGradient>
<linearGradient id="g55" x1="0" y1="0" x2="0" y2="1"><stop offset="0" stop-color="#e3a400"/><stop offset="1" stop-color="#cc8800"/></linearGradient></defs>
<path d="M0 0 H66 V48 L72 53 V84 H0 Z" fill="url(#g55)"/>
<path d="M0 0 L60 11 V59 L54 61 V96 L0 84 Z" fill="url(#g54)"/></svg><div style="position:absolute;left:1217.52px;top:876.68px;font-size:24px;line-height:30px;color:#e6e6e6;font-weight:normal;white-space:nowrap;transform-origin:0 0;transform:scaleX(1.0059);will-change:transform;">Program</div><svg style="position:absolute;left:1340px;top:778px;" width="72" height="96" viewBox="0 0 72 96"><defs><linearGradient id="g56" x1="0" y1="0" x2="0" y2="1"><stop offset="0" stop-color="#fdd975"/><stop offset="1" stop-color="#fbc12d"/></linearGradient>
<linearGradient id="g57" x1="0" y1="0" x2="0" y2="1"><stop offset="0" stop-color="#e3a400"/><stop offset="1" stop-color="#cc8800"/></linearGradient></defs>
<path d="M0 0 H66 V48 L72 53 V84 H0 Z" fill="url(#g57)"/>
<path d="M0 0 L60 11 V59 L54 61 V96 L0 84 Z" fill="url(#g56)"/></svg><div style="position:absolute;left:1339.03px;top:876.68px;font-size:24px;line-height:30px;color:#e6e6e6;font-weight:normal;white-space:nowrap;transform-origin:0 0;transform:scaleX(0.9481);will-change:transform;">Recovery</div><div style="position:absolute;left:1562px;top:364px;width:36px;height:536px;background:#505050;"></div><svg style="position:absolute;left:1572px;top:378px;" width="16" height="8" viewBox="0 0 16 8"><path d="M0 8 L8 0 L16 8 Z" fill="#8a8a8a"/></svg><div style="position:absolute;left:1572px;top:400px;width:16px;height:482px;background:#686868;"></div></div><div style="position:absolute;left:1600px;top:0;width:1601px;height:900px;overflow:hidden;background:#8a8a8a"><div style="position:absolute;left:2px;top:2px;width:1597px;height:60px;background:linear-gradient(#cccccc 0px, #cccccc 53px, #b8b8b8 60px);"></div><svg style="position:absolute;left:10px;top:16px;" width="32" height="32" viewBox="0 0 32 32"><defs><linearGradient id="g58" x1="0" y1="0" x2="0" y2="1"><stop offset="0" stop-color="#92aaf6"/><stop offset="1" stop-color="#6c86d8"/></linearGradient></defs>
<rect x="0" y="0" width="32" height="32" fill="#5c80e6"/>
<rect x="2" y="2" width="28" height="28" fill="url(#g58)"/>
<rect x="2" y="2" width="28" height="6" fill="#d0d0d0"/>
<rect x="16" y="11" width="14" height="2" fill="#c8d4f8"/>
<path d="M2 23 H6 V27 H14 V13 H30 V31 H26 V23 H20 V21 H26 V15 H18 V31 H2 Z" fill="#ffffff"/></svg><div style="position:absolute;left:48.76px;top:18.68px;font-size:24px;line-height:30px;color:#000000;font-weight:normal;white-space:nowrap;transform-origin:0 0;transform:scaleX(1.0187);will-change:transform;">C:\</div><div style="position:absolute;left:1362px;top:30px;width:20px;height:2px;background:#000000;"></div><div style="position:absolute;left:1452px;top:22px;width:16px;height:16px;border:2px solid #000000;background:transparent;"></div><svg style="position:absolute;left:1542px;top:22px;" width="20" height="20" viewBox="0 0 20 20"><path d="M1 1 L19 19 M19 1 L1 19" stroke="#000000" stroke-width="1.8"/></svg><div style="position:absolute;left:2px;top:62px;width:1597px;height:46px;background:#f0f0f0;"></div><div style="position:absolute;left:2px;top:62px;width:112px;height:46px;background:linear-gradient(90deg, #0063b1 0px, #0063b1 100px, #00519a 112px);"></div><div style="position:absolute;left:37.61px;top:72.68px;font-size:24px;line-height:30px;color:#ffffff;font-weight:normal;white-space:nowrap;transform-origin:0 0;transform:scaleX(1.0130);will-change:transform;">File</div><div style="position:absolute;left:230px;top:62px;width:1369px;height:46px;background:linear-gradient(#f0f0f0 0px, #f0f0f0 38px, #dcdcdc 46px);"></div><div style="position:absolute;left:230px;top:62px;width:12px;height:46px;background:linear-gradient(90deg, #dcdcdc, rgba(240,240,240,0));"></div><div style="position:absolute;left:114px;top:62px;width:116px;height:46px;background:#f5f5f5;"></div><div style="position:absolute;left:137.68px;top:70.68px;font-size:24px;line-height:30px;color:#1e1e1e;font-weight:normal;white-space:nowrap;transform-origin:0 0;transform:scaleX(1.0265);will-change:transform;">Home</div><div style="position:absolute;left:262.30px;top:70.68px;font-size:24px;line-height:30px;color:#1e1e1e;font-weight:normal;white-space:nowrap;transform-origin:0 0;transform:scaleX(0.9871);will-change:transform;">View</div><svg style="position:absolute;left:1522px;top:78px;" width="14" height="10" viewBox="0 0 14 10"><path d="M0 10 L7 1 L14 10 L10 10 L7 6 L4 10 Z" fill="#1a1a1a"/></svg><div style="position:absolute;left:1568px;top:70.68px;font-size:24px;line-height:30px;color:#1a1a1a;font-weight:bold;white-space:nowrap;">?</div><div style="position:absolute;left:2px;top:108px;width:1597px;height:180px;background:#f5f5f5;"></div><div style="position:absolute;left:22px;top:110px;width:100px;height:142px;background:#c9c9c9;"></div><svg style="position:absolute;left:40px;top:128px;" width="64" height="64" viewBox="0 0 64 64"><path d="M1 1 H39 L41 3 V55 H1 Z" fill="#e4e4e4" stroke="#b2b2b2" stroke-width="2"/>
<path d="M23 9 H60 L63 12 V63 H23 Z" fill="#fdfdfd" stroke="#b2b2b2" stroke-width="2"/></svg><svg style="position:absolute;left:140px;top:128px;" width="48" height="64" viewBox="0 0 48 64"><rect x="2" y="8" width="44" height="54" fill="#fcfcfc" stroke="#3a8fdb" stroke-width="4"/>
<path d="M16 14 L21 6 V0 H27 V6 L32 14 Z" fill="#b4b4b4"/></svg><div style="position:absolute;left:38.78px;top:200.68px;font-size:24px;line-height:30px;color:#262626;font-weight:normal;white-space:nowrap;transform-origin:0 0;transform:scaleX(1.0007);will-change:transform;">Copy</div><div style="position:absolute;left:139.56px;top:200.68px;font-size:24px;line-height:30px;color:#262626;font-weight:normal;white-space:nowrap;transform-origin:0 0;transform:scaleX(0.9360);will-change:transform;">Paste</div><svg style="position:absolute;left:228px;top:118px;" width="26" height="32" viewBox="0 0 26 32"><path d="M4.5 1 L13 18 L8.5 22 M21.5 1 L13 18 L17.5 22" stroke="#3a8fdb" stroke-width="3" fill="none" stroke-linejoin="round"/>
<circle cx="6" cy="26" r="4.2" stroke="#3a8fdb" stroke-width="2.6" fill="none"/>
<circle cx="20" cy="26" r="4.2" stroke="#3a8fdb" stroke-width="2.6" fill="none"/></svg><div style="position:absolute;left:264.75px;top:118.68px;font-size:24px;line-height:30px;color:#262626;font-weight:normal;white-space:nowrap;transform-origin:0 0;transform:scaleX(1.0291);will-change:transform;">Cut</div><svg style="position:absolute;left:228px;top:166px;" width="32" height="20" viewBox="0 0 32 20"><rect x="1" y="1" width="30" height="18" fill="#f6f6f6" stroke="#bdbdbd" stroke-width="2"/>
<path d="M6 6 V12 M9 6 V12 M12 12 H18" stroke="#aaaaaa" stroke-width="1.5"/></svg><div style="position:absolute;left:264.80px;top:166.68px;font-size:24px;line-height:30px;color:#262626;font-weight:normal;white-space:nowrap;transform-origin:0 0;transform:scaleX(0.9882);will-change:transform;">Copy Path</div><svg style="position:absolute;left:232px;top:214px;" width="24" height="32" viewBox="0 0 24 32"><rect x="1" y="3" width="22" height="28" fill="#f8f8f8" stroke="#3a8fdb" stroke-width="2"/>
<path d="M6 5 L8 1 H16 L18 5 Z" fill="#b4b4b4"/>
<path d="M5 26 L14 17" stroke="#555a60" stroke-width="2.6"/><path d="M11 10 H20 V19 Z" fill="#6a7078"/></svg><div style="position:absolute;left:265.06px;top:214.68px;font-size:24px;line-height:30px;color:#262626;font-weight:normal;white-space:nowrap;transform-origin:0 0;transform:scaleX(0.9850);will-change:transform;">Paste shortcut</div><div style="position:absolute;left:172.85px;top:257.68px;font-size:24px;line-height:30px;color:#262626;font-weight:normal;white-space:nowrap;transform-origin:0 0;transform:scaleX(0.9404);will-change:transform;">Clipboard</div><div style="position:absolute;left:432px;top:116px;width:2px;height:164px;background:#e0e0e0;"></div><div style="position:absolute;left:925px;top:116px;width:2px;height:164px;background:#e0e0e0;"></div><div style="position:absolute;left:1272px;top:116px;width:2px;height:164px;background:#e0e0e0;"></div><div style="position:absolute;left:1424px;top:116px;width:2px;height:164px;background:#e0e0e0;"></div><div style="position:absolute;left:1523px;top:116px;width:2px;height:164px;background:#e0e0e0;"></div><svg style="position:absolute;left:474px;top:128px;" width="56" height="64" viewBox="0 0 56 64"><defs><linearGradient id="g59" x1="0" y1="0" x2="0" y2="1"><stop offset="0" stop-color="#fdd975"/><stop offset="1" stop-color="#fbc12d"/></linearGradient>
<linearGradient id="g60" x1="0" y1="0" x2="0" y2="1"><stop offset="0" stop-color="#e2a200"/><stop offset="1" stop-color="#cc8800"/></linearGradient></defs>
<rect x="0" y="0" width="44" height="64" fill="url(#g59)"/>
<path d="M40 32 H46 L48 34 V64 H40 Z" fill="url(#g60)"/>
<path d="M24 44 L40 28 V40 H54 V50 H40 V60 Z" fill="#3184c8"/></svg><div style="position:absolute;left:461.33px;top:200.68px;font-size:24px;line-height:30px;color:#262626;font-weight:normal;white-space:nowrap;transform-origin:0 0;transform:scaleX(1.0510);will-change:transform;">Move to</div><svg style="position:absolute;left:598px;top:128px;" width="48" height="64" viewBox="0 0 48 64"><defs><linearGradient id="g61" x1="0" y1="0" x2="0" y2="1"><stop offset="0" stop-color="#fdd975"/><stop offset="1" stop-color="#fbc12d"/></linearGradient>
<linearGradient id="g62" x1="0" y1="0" x2="0" y2="1"><stop offset="0" stop-color="#e2a200"/><stop offset="1" stop-color="#cc8800"/></linearGradient></defs>
<rect x="0" y="0" width="44" height="64" fill="url(#g61)"/>
<path d="M40 32 H46 L48 34 V64 H40 Z" fill="url(#g62)"/>
<path d="M18 20 H37 L40 23 V50 H18 Z" fill="#e2e2e2"/>
<path d="M10 28 H29 L32 31 V58 H10 Z" fill="#fbfbfb"/></svg><div style="position:absolute;left:586.73px;top:200.68px;font-size:24px;line-height:30px;color:#262626;font-weight:normal;white-space:nowrap;transform-origin:0 0;transform:scaleX(1.0387);will-change:transform;">Copy to</div><svg style="position:absolute;left:710px;top:128px;" width="64" height="64" viewBox="0 0 64 64"><defs><linearGradient id="g63" x1="0" y1="0" x2="0" y2="1"><stop offset="0" stop-color="#c03a08"/><stop offset="1" stop-color="#a3300e"/></linearGradient></defs>
<path d="M0 9 L9 0 L32 23 L55 0 L64 9 L41 32 L64 55 L55 64 L32 41 L9 64 L0 55 L23 32 Z" fill="url(#g63)"/></svg><div style="position:absolute;left:707.53px;top:200.68px;font-size:24px;line-height:30px;color:#262626;font-weight:normal;white-space:nowrap;transform-origin:0 0;transform:scaleX(1.0024);will-change:transform;">Delete</div><svg style="position:absolute;left:824px;top:128px;" width="64" height="52" viewBox="0 0 64 52"><rect x="1" y="15" width="62" height="22" fill="#fbfbfb" stroke="#b8b8b8" stroke-width="2"/>
<path d="M38 0 H58 V4 H50 V48 H58 V52 H38 V48 H46 V4 H38 Z" fill="#7a8088"/></svg><div style="position:absolute;left:813.10px;top:200.68px;font-size:24px;line-height:30px;color:#262626;font-weight:normal;white-space:nowrap;transform-origin:0 0;transform:scaleX(0.9660);will-change:transform;">Rename</div><div style="position:absolute;left:634.65px;top:257.68px;font-size:24px;line-height:30px;color:#262626;font-weight:normal;white-space:nowrap;transform-origin:0 0;transform:scaleX(0.9277);will-change:transform;">Organize</div><svg style="position:absolute;left:982px;top:128px;" width="52" height="64" viewBox="0 0 52 64"><defs><linearGradient id="g64" x1="0" y1="0" x2="0" y2="1"><stop offset="0" stop-color="#fdd975"/><stop offset="1" stop-color="#fbc12d"/></linearGradient></defs>
<rect x="0" y="0" width="44" height="64" fill="url(#g64)"/>
<path d="M40 30 L46 35 V64 H40 Z" fill="#d89400"/>
<path d="M26 26 H34 V38 H52 V46 H34 V58 H26 V46 H20 V38 H26 Z" fill="#1f7a3c"/></svg><div style="position:absolute;left:954.97px;top:200.68px;font-size:24px;line-height:30px;color:#262626;font-weight:normal;white-space:nowrap;transform-origin:0 0;transform:scaleX(1.0325);will-change:transform;">New folder</div><svg style="position:absolute;left:1098px;top:118px;" width="32" height="32" viewBox="0 0 32 32"><defs><linearGradient id="g65" x1="0" y1="0" x2="0" y2="1"><stop offset="0" stop-color="#21a35a"/><stop offset="1" stop-color="#16803f"/></linearGradient></defs>
<path d="M12 0 H20 V12 H32 V20 H20 V32 H12 V20 H0 V12 H12 Z" fill="url(#g65)"/></svg><div style="position:absolute;left:1134.98px;top:118.68px;font-size:24px;line-height:30px;color:#262626;font-weight:normal;white-space:nowrap;transform-origin:0 0;transform:scaleX(1.0262);will-change:transform;">New item</div><svg style="position:absolute;left:1098px;top:166px;" width="32" height="32" viewBox="0 0 32 32"><path d="M9 1 H27 L31 5 V31 H9 Z" fill="#fbfbfb" stroke="#b8b8b8" stroke-width="2"/>
<path d="M0 5 H5 M3 10 H6 M4 15 H6" stroke="#3a8fdb" stroke-width="1.6"/></svg><div style="position:absolute;left:1135.22px;top:167.68px;font-size:24px;line-height:30px;color:#262626;font-weight:normal;white-space:nowrap;transform-origin:0 0;transform:scaleX(0.9023);will-change:transform;">Easy access</div><div style="position:absolute;left:1076.54px;top:257.68px;font-size:24px;line-height:30px;color:#262626;font-weight:normal;white-space:nowrap;transform-origin:0 0;transform:scaleX(0.9457);will-change:transform;">New</div><svg style="position:absolute;left:1310px;top:118px;" width="24" height="32" viewBox="0 0 24 32"><path d="M1 1 H19 L23 5 V31 H1 Z" fill="#fbfbfb" stroke="#c0c0c0" stroke-width="2"/><path d="M5 17 L10 22 L19 12" stroke="#c0392b" stroke-width="2.6" fill="none"/></svg><svg style="position:absolute;left:1376px;top:118px;" width="28" height="32" viewBox="0 0 28 32"><path d="M1 1 H19 L23 5 V31 H1 Z" fill="#fbfbfb" stroke="#c0c0c0" stroke-width="2"/>
<path d="M8 28 L26 10" stroke="#f2b62a" stroke-width="5"/><path d="M6 30 L8 24 L11 27 Z" fill="#555"/></svg><svg style="position:absolute;left:1296px;top:168px;" width="24" height="32" viewBox="0 0 24 32"><path d="M1 1 H19 L23 5 V31 H1 Z" fill="#fbfbfb" stroke="#c0c0c0" stroke-width="2"/></svg><svg style="position:absolute;left:1345px;top:179px;" width="14" height="9" viewBox="0 0 14 9"><path d="M0 0 L7 4 L14 0 L7 9 Z" fill="#1a1a1a"/></svg><div style="position:absolute;left:1320.93px;top:257.68px;font-size:24px;line-height:30px;color:#262626;font-weight:normal;white-space:nowrap;transform-origin:0 0;transform:scaleX(0.9390);will-change:transform;">Open</div><svg style="position:absolute;left:1444px;top:118px;" width="32" height="32" viewBox="0 0 32 32"><rect x="0" y="0" width="14" height="14" fill="#2f86cf"/><rect x="18" y="0" width="14" height="14" fill="#2f86cf"/><rect x="0" y="18" width="14" height="14" fill="#2f86cf"/><rect x="18" y="18" width="14" height="14" fill="#2f86cf"/></svg><svg style="position:absolute;left:1444px;top:166px;" width="32" height="32" viewBox="0 0 32 32"><rect x="0" y="0" width="14" height="14" fill="#e0e0e0"/><rect x="18" y="0" width="14" height="14" fill="#e0e0e0"/><rect x="0" y="18" width="14" height="14" fill="#e0e0e0"/><rect x="18" y="18" width="14" height="14" fill="#e0e0e0"/></svg><svg style="position:absolute;left:1444px;top:214px;" width="32" height="32" viewBox="0 0 32 32"><rect x="0" y="0" width="14" height="14" fill="#e0e0e0"/><rect x="18" y="0" width="14" height="14" fill="#2f86cf"/><rect x="0" y="18" width="14" height="14" fill="#2f86cf"/><rect x="18" y="18" width="14" height="14" fill="#e0e0e0"/></svg><div style="position:absolute;left:1445.04px;top:257.68px;font-size:24px;line-height:30px;color:#262626;font-weight:normal;white-space:nowrap;transform-origin:0 0;transform:scaleX(0.8772);will-change:transform;">Select</div><div style="position:absolute;left:2px;top:288px;width:1597px;height:76px;background:#ffffff;"></div><div style="position:absolute;left:2px;top:356px;width:1597px;height:8px;background:linear-gradient(#f6f6f6,#e2e2e2);"></div><div style="position:absolute;left:2px;top:288px;width:1597px;height:15px;background:linear-gradient(#c9c9c9, #fbfbfb);"></div><svg style="position:absolute;left:27px;top:314px;" width="28" height="24" viewBox="0 0 28 24"><path d="M27 12 H3 M12 2 L2 12 L12 22" stroke="#777777" stroke-width="3" fill="none"/></svg><svg style="position:absolute;left:87px;top:314px;" width="28" height="24" viewBox="0 0 28 24"><path d="M1 12 H25 M16 2 L26 12 L16 22" stroke="#b8b8b8" stroke-width="3" fill="none"/></svg><svg style="position:absolute;left:140px;top:320px;" width="18" height="12" viewBox="0 0 18 12"><path d="M1 1 L9 10 L17 1" stroke="#777777" stroke-width="3.5" fill="none"/></svg><svg style="position:absolute;left:182px;top:311px;" width="24" height="27" viewBox="0 0 24 27"><path d="M12 27 V3 M2 13 L12 2 L22 13" stroke="#777777" stroke-width="3" fill="none"/></svg><div style="position:absolute;left:218px;top:296px;width:900px;height:56px;border:2px solid #d9d9d9;background:transparent;"></div><div style="position:absolute;left:1057px;top:298px;width:2px;height:56px;background:#d9d9d9;"></div><svg style="position:absolute;left:232px;top:312px;" width="20" height="28" viewBox="0 0 24 32"><rect x="0" y="0" width="24" height="32" fill="#b8b8b8"/>
<rect x="4" y="2" width="18" height="4" fill="#e2e2e2"/>
<circle cx="12" cy="19" r="10" fill="#f6f6f6"/>
<rect x="10" y="18" width="4" height="2" fill="#aaaaaa"/>
<path d="M2 29.5 L9 23.5" stroke="#66707c" stroke-width="2"/></svg><svg style="position:absolute;left:266px;top:318px;" width="10" height="14" viewBox="0 0 10 14"><path d="M0 2 L2 0 L9 7 L2 14 L0 12 L5 7 Z" fill="#7a7a7a"/></svg><div style="position:absolute;left:285.11px;top:312.68px;font-size:24px;line-height:30px;color:#1e1e1e;font-weight:normal;white-space:nowrap;transform-origin:0 0;transform:scaleX(0.9581);will-change:transform;">File System</div><svg style="position:absolute;left:415px;top:318px;" width="10" height="14" viewBox="0 0 10 14"><path d="M0 2 L2 0 L9 7 L2 14 L0 12 L5 7 Z" fill="#7a7a7a"/></svg><div style="position:absolute;left:434.50px;top:312.68px;font-size:24px;line-height:30px;color:#1e1e1e;font-weight:normal;white-space:nowrap;transform-origin:0 0;transform:scaleX(0.9859);will-change:transform;">C:</div><svg style="position:absolute;left:468px;top:318px;" width="10" height="14" viewBox="0 0 10 14"><path d="M0 2 L2 0 L9 7 L2 14 L0 12 L5 7 Z" fill="#7a7a7a"/></svg><svg style="position:absolute;left:1034px;top:322px;" width="14" height="8" viewBox="0 0 14 8"><path d="M0 0 H14 L7 8 Z" fill="#1a1a1a"/></svg><svg style="position:absolute;left:1078px;top:313px;" width="24" height="24" viewBox="0 0 24 24"><path d="M18.5 6 A9 9 0 1 1 9 3.5" stroke="#777777" stroke-width="3" fill="none"/><path d="M7 0 L13 3.5 L8 9 Z" fill="#777777"/></svg><div style="position:absolute;left:1158px;top:296px;width:420px;height:56px;border:2px solid #d9d9d9;background:transparent;"></div><svg style="position:absolute;left:1188px;top:314px;" width="24" height="24" viewBox="0 0 24 24"><circle cx="15" cy="9" r="7.5" stroke="#8a8a8a" stroke-width="2" fill="none"/><path d="M1 23 L10 14" stroke="#8a8a8a" stroke-width="2"/></svg><div style="position:absolute;left:1238.96px;top:308.68px;font-size:24px;line-height:30px;color:#8a8a8a;font-weight:normal;white-space:nowrap;transform-origin:0 0;transform:scaleX(0.9529);will-change:transform;">Search C:\</div><div style="position:absolute;left:2px;top:364px;width:452px;height:536px;background:#fdfdfd;"></div><div style="position:absolute;left:454px;top:364px;width:4px;height:536px;background:#dedede;"></div><div style="position:absolute;left:2px;top:508px;width:452px;height:48px;background:#d9d9d9;"></div><svg style="position:absolute;left:46px;top:376px;" width="24" height="24" viewBox="0 0 42.4 40"><g fill="#1f88e6"><path d="M12.5 0L0 8.1l8.7 7L21.2 7.2z"/><path d="M0 21.9l12.5 8.2 8.7-7.3-12.6-7.8z"/>
<path d="M21.2 22.8l8.8 7.3 12.4-8.1-8.6-6.9z"/><path d="M42.4 8.1L30 0l-8.8 7.3 12.6 7.8z"/>
<path d="M21.3 24.4l-8.8 7.3-3.7-2.5v2.8l12.5 7.5 12.5-7.5v-2.8l-3.8 2.5z"/></g></svg><div style="position:absolute;left:81.28px;top:374.68px;font-size:24px;line-height:30px;color:#1a1a1a;font-weight:normal;white-space:nowrap;transform-origin:0 0;transform:scaleX(1.0250);will-change:transform;">Dropbox</div><svg style="position:absolute;left:46px;top:424px;" width="24" height="24" viewBox="0 0 24 24"><rect x="1" y="1" width="22" height="16" fill="#bfe0fb" stroke="#7e8f9c" stroke-width="2"/>
<rect x="10" y="18" width="4" height="3" fill="#58656e"/><rect x="5" y="21" width="14" height="3" fill="#4a565e"/></svg><div style="position:absolute;left:81.42px;top:422.68px;font-size:24px;line-height:30px;color:#1a1a1a;font-weight:normal;white-space:nowrap;transform-origin:0 0;transform:scaleX(0.9564);will-change:transform;">File System</div><svg style="position:absolute;left:58px;top:468px;" width="32" height="32" viewBox="0 0 32 32"><defs><linearGradient id="g66" x1="0" y1="0" x2="0" y2="1"><stop offset="0" stop-color="#3d93de"/><stop offset="1" stop-color="#2c7fcf"/></linearGradient></defs>
<rect x="1" y="1" width="30" height="22" fill="url(#g66)" stroke="#bdbdbd" stroke-width="2"/>
<rect x="13" y="24" width="6" height="3" fill="#8a9096"/><rect x="6" y="28" width="20" height="4" fill="#c4c4c4"/></svg><div style="position:absolute;left:96.93px;top:470.68px;font-size:24px;line-height:30px;color:#1a1a1a;font-weight:normal;white-space:nowrap;transform-origin:0 0;transform:scaleX(0.8945);will-change:transform;">SPLITWIREZ-PC</div><svg style="position:absolute;left:78px;top:516px;" width="24" height="32" viewBox="0 0 24 32"><rect x="0" y="0" width="24" height="32" fill="#b8b8b8"/>
<rect x="4" y="2" width="18" height="4" fill="#e2e2e2"/>
<circle cx="12" cy="19" r="10" fill="#f6f6f6"/>
<rect x="10" y="18" width="4" height="2" fill="#aaaaaa"/>
<path d="M2 29.5 L9 23.5" stroke="#66707c" stroke-width="2"/></svg><div style="position:absolute;left:113.17px;top:518.68px;font-size:24px;line-height:30px;color:#1a1a1a;font-weight:normal;white-space:nowrap;transform-origin:0 0;transform:scaleX(1.0119);will-change:transform;">C:\</div><svg style="position:absolute;left:78px;top:564px;" width="24" height="32" viewBox="0 0 24 32"><rect x="0" y="0" width="24" height="32" fill="#b8b8b8"/>
<rect x="4" y="2" width="18" height="4" fill="#e2e2e2"/>
<circle cx="12" cy="19" r="10" fill="#f6f6f6"/>
<rect x="10" y="18" width="4" height="2" fill="#aaaaaa"/>
<path d="M2 29.5 L9 23.5" stroke="#66707c" stroke-width="2"/></svg><div style="position:absolute;left:111.70px;top:566.68px;font-size:24px;line-height:30px;color:#1a1a1a;font-weight:normal;white-space:nowrap;transform-origin:0 0;transform:scaleX(1.1185);will-change:transform;">D:\</div><svg style="position:absolute;left:42px;top:616px;" width="32" height="24" viewBox="0 0 32 24"><path d="M0 2 H10 L12 4 H26 V24 H0 Z" fill="#fbc12d"/>
<path d="M0 6 H26 V24 H0 Z" fill="#fdc72f"/>
<path d="M21 0 H32 V10 Z" fill="#8e3fb8"/><path d="M23 1 L31 9 M26 0 L32 6" stroke="#d07be8" stroke-width="1.5"/></svg><div style="position:absolute;left:81.27px;top:614.68px;font-size:24px;line-height:30px;color:#1a1a1a;font-weight:normal;white-space:nowrap;transform-origin:0 0;transform:scaleX(0.8779);will-change:transform;">FTP/FTPS</div><svg style="position:absolute;left:44px;top:664px;" width="28" height="24" viewBox="0 0 28 24"><path d="M9 0 H19 L28 16 H18 Z" fill="#f5c518"/>
<path d="M9 0 L14 8 L5 24 L0 16 Z" fill="#3aa757"/>
<path d="M5 24 L10 16 H28 L23 24 Z" fill="#2a7be4"/></svg><div style="position:absolute;left:80.79px;top:662.68px;font-size:24px;line-height:30px;color:#1a1a1a;font-weight:normal;white-space:nowrap;transform-origin:0 0;transform:scaleX(1.0015);will-change:transform;">Google Drive</div><svg style="position:absolute;left:44px;top:714px;" width="28" height="20" viewBox="0 0 28 20"><g fill="#f39c3e"><rect x="14" y="0" width="14" height="6" rx="2"/><rect x="0" y="6" width="16" height="6" rx="2"/>
<rect x="6" y="12" width="6" height="8" rx="2"/><rect x="12" y="4" width="4" height="6"/></g>
<rect x="18" y="14" width="10" height="6" fill="#8a8a8a"/></svg><div style="position:absolute;left:81.95px;top:710.68px;font-size:24px;line-height:30px;color:#1a1a1a;font-weight:normal;white-space:nowrap;transform-origin:0 0;transform:scaleX(0.9637);will-change:transform;">Amazon S3</div><div style="position:absolute;left:458px;top:364px;width:1104px;height:536px;background:#f5f5f5;"></div><svg style="position:absolute;left:472px;top:370px;" width="72" height="96" viewBox="0 0 72 96"><defs><linearGradient id="g67" x1="0" y1="0" x2="0" y2="1"><stop offset="0" stop-color="#fdd975"/><stop offset="1" stop-color="#fbc12d"/></linearGradient>
<linearGradient id="g68" x1="0" y1="0" x2="0" y2="1"><stop offset="0" stop-color="#e3a400"/><stop offset="1" stop-color="#cc8800"/></linearGradient></defs>
<path d="M0 0 H66 V48 L72 53 V84 H0 Z" fill="url(#g68)"/>
<path d="M0 0 L60 11 V59 L54 61 V96 L0 84 Z" fill="url(#g67)"/></svg><div style="position:absolute;left:471.16px;top:468.68px;font-size:24px;line-height:30px;color:#1a1a1a;font-weight:normal;white-space:nowrap;transform-origin:0 0;transform:scaleX(0.9444);will-change:transform;">$Recycle.</div><div style="position:absolute;left:501.64px;top:500.68px;font-size:24px;line-height:30px;color:#1a1a1a;font-weight:normal;white-space:nowrap;transform-origin:0 0;transform:scaleX(1.0462);will-change:transform;">Bin</div><svg style="position:absolute;left:596px;top:370px;" width="72" height="96" viewBox="0 0 72 96"><defs><linearGradient id="g69" x1="0" y1="0" x2="0" y2="1"><stop offset="0" stop-color="#fdd975"/><stop offset="1" stop-color="#fbc12d"/></linearGradient>
<linearGradient id="g70" x1="0" y1="0" x2="0" y2="1"><stop offset="0" stop-color="#e3a400"/><stop offset="1" stop-color="#cc8800"/></linearGradient></defs>
<path d="M0 0 H66 V48 L72 53 V84 H0 Z" fill="url(#g70)"/>
<path d="M0 0 L60 11 V59 L54 61 V96 L0 84 Z" fill="url(#g69)"/></svg><div style="position:absolute;left:596.74px;top:468.68px;font-size:24px;line-height:30px;color:#1a1a1a;font-weight:normal;white-space:nowrap;transform-origin:0 0;transform:scaleX(0.9937);will-change:transform;">$WINDO</div><div style="position:absolute;left:602.40px;top:500.68px;font-size:24px;line-height:30px;color:#1a1a1a;font-weight:normal;white-space:nowrap;transform-origin:0 0;transform:scaleX(0.9289);will-change:transform;">WS.~BT</div><svg style="position:absolute;left:720px;top:370px;" width="72" height="96" viewBox="0 0 72 96"><defs><linearGradient id="g71" x1="0" y1="0" x2="0" y2="1"><stop offset="0" stop-color="#fdd975"/><stop offset="1" stop-color="#fbc12d"/></linearGradient>
<linearGradient id="g72" x1="0" y1="0" x2="0" y2="1"><stop offset="0" stop-color="#e3a400"/><stop offset="1" stop-color="#cc8800"/></linearGradient></defs>
<path d="M0 0 H66 V48 L72 53 V84 H0 Z" fill="url(#g72)"/>
<path d="M0 0 L60 11 V59 L54 61 V96 L0 84 Z" fill="url(#g71)"/></svg><div style="position:absolute;left:717.89px;top:468.68px;font-size:24px;line-height:30px;color:#1a1a1a;font-weight:normal;white-space:nowrap;transform-origin:0 0;transform:scaleX(1.0121);will-change:transform;">$Window</div><div style="position:absolute;left:734.06px;top:500.68px;font-size:24px;line-height:30px;color:#1a1a1a;font-weight:normal;white-space:nowrap;transform-origin:0 0;transform:scaleX(0.9573);will-change:transform;">s.~WS</div><svg style="position:absolute;left:844px;top:370px;" width="72" height="96" viewBox="0 0 72 96"><defs><linearGradient id="g73" x1="0" y1="0" x2="0" y2="1"><stop offset="0" stop-color="#fdd975"/><stop offset="1" stop-color="#fbc12d"/></linearGradient>
<linearGradient id="g74" x1="0" y1="0" x2="0" y2="1"><stop offset="0" stop-color="#e3a400"/><stop offset="1" stop-color="#cc8800"/></linearGradient></defs>
<path d="M0 0 H66 V48 L72 53 V84 H0 Z" fill="url(#g74)"/>
<path d="M0 0 L60 11 V59 L54 61 V96 L0 84 Z" fill="url(#g73)"/></svg><div style="position:absolute;left:884.19px;top:468.68px;font-size:24px;line-height:30px;color:#1a1a1a;font-weight:normal;white-space:nowrap;transform-origin:0 0;transform:scaleX(1.1707);will-change:transform;">2</div><svg style="position:absolute;left:968px;top:370px;" width="72" height="96" viewBox="0 0 72 96"><defs><linearGradient id="g75" x1="0" y1="0" x2="0" y2="1"><stop offset="0" stop-color="#fdd975"/><stop offset="1" stop-color="#fbc12d"/></linearGradient>
<linearGradient id="g76" x1="0" y1="0" x2="0" y2="1"><stop offset="0" stop-color="#e3a400"/><stop offset="1" stop-color="#cc8800"/></linearGradient></defs>
<path d="M0 0 H66 V48 L72 53 V84 H0 Z" fill="url(#g76)"/>
<path d="M0 0 L60 11 V59 L54 61 V96 L0 84 Z" fill="url(#g75)"/></svg><div style="position:absolute;left:967.11px;top:468.68px;font-size:24px;line-height:30px;color:#1a1a1a;font-weight:normal;white-space:nowrap;transform-origin:0 0;transform:scaleX(0.9829);will-change:transform;">41eb22f1</div><div style="position:absolute;left:965.20px;top:500.68px;font-size:24px;line-height:30px;color:#1a1a1a;font-weight:normal;white-space:nowrap;transform-origin:0 0;transform:scaleX(0.9991);will-change:transform;">b85e991f</div><div style="position:absolute;left:992.99px;top:532.68px;font-size:24px;line-height:30px;color:#1a1a1a;font-weight:normal;white-space:nowrap;transform-origin:0 0;transform:scaleX(0.9891);will-change:transform;">afa2</div><svg style="position:absolute;left:1092px;top:370px;" width="72" height="96" viewBox="0 0 72 96"><defs><linearGradient id="g77" x1="0" y1="0" x2="0" y2="1"><stop offset="0" stop-color="#fdd975"/><stop offset="1" stop-color="#fbc12d"/></linearGradient>
<linearGradient id="g78" x1="0" y1="0" x2="0" y2="1"><stop offset="0" stop-color="#e3a400"/><stop offset="1" stop-color="#cc8800"/></linearGradient></defs>
<path d="M0 0 H66 V48 L72 53 V84 H0 Z" fill="url(#g78)"/>
<path d="M0 0 L60 11 V59 L54 61 V96 L0 84 Z" fill="url(#g77)"/></svg><div style="position:absolute;left:1087.76px;top:468.68px;font-size:24px;line-height:30px;color:#1a1a1a;font-weight:normal;white-space:nowrap;transform-origin:0 0;transform:scaleX(0.9394);will-change:transform;">AeroGlass</div><svg style="position:absolute;left:1216px;top:370px;" width="72" height="96" viewBox="0 0 72 96"><defs><linearGradient id="g79" x1="0" y1="0" x2="0" y2="1"><stop offset="0" stop-color="#fdd975"/><stop offset="1" stop-color="#fbc12d"/></linearGradient>
<linearGradient id="g80" x1="0" y1="0" x2="0" y2="1"><stop offset="0" stop-color="#e3a400"/><stop offset="1" stop-color="#cc8800"/></linearGradient></defs>
<path d="M0 0 H66 V48 L72 53 V84 H0 Z" fill="url(#g80)"/>
<path d="M0 0 L60 11 V59 L54 61 V96 L0 84 Z" fill="url(#g79)"/></svg><div style="position:absolute;left:1246.29px;top:468.68px;font-size:24px;line-height:30px;color:#1a1a1a;font-weight:normal;white-space:nowrap;transform-origin:0 0;transform:scaleX(1.1064);will-change:transform;">bin</div><svg style="position:absolute;left:1340px;top:370px;" width="72" height="96" viewBox="0 0 72 96"><defs><linearGradient id="g81" x1="0" y1="0" x2="0" y2="1"><stop offset="0" stop-color="#fdd975"/><stop offset="1" stop-color="#fbc12d"/></linearGradient>
<linearGradient id="g82" x1="0" y1="0" x2="0" y2="1"><stop offset="0" stop-color="#e3a400"/><stop offset="1" stop-color="#cc8800"/></linearGradient></defs>
<path d="M0 0 H66 V48 L72 53 V84 H0 Z" fill="url(#g82)"/>
<path d="M0 0 L60 11 V59 L54 61 V96 L0 84 Z" fill="url(#g81)"/></svg><div style="position:absolute;left:1361.01px;top:468.68px;font-size:24px;line-height:30px;color:#1a1a1a;font-weight:normal;white-space:nowrap;transform-origin:0 0;transform:scaleX(1.1225);will-change:transform;">boot</div><svg style="position:absolute;left:472px;top:574px;" width="72" height="96" viewBox="0 0 72 96"><defs><linearGradient id="g83" x1="0" y1="0" x2="0" y2="1"><stop offset="0" stop-color="#fdd975"/><stop offset="1" stop-color="#fbc12d"/></linearGradient>
<linearGradient id="g84" x1="0" y1="0" x2="0" y2="1"><stop offset="0" stop-color="#e3a400"/><stop offset="1" stop-color="#cc8800"/></linearGradient></defs>
<path d="M0 0 H66 V48 L72 53 V84 H0 Z" fill="url(#g84)"/>
<path d="M0 0 L60 11 V59 L54 61 V96 L0 84 Z" fill="url(#g83)"/></svg><div style="position:absolute;left:465.42px;top:672.68px;font-size:24px;line-height:30px;color:#1a1a1a;font-weight:normal;white-space:nowrap;transform-origin:0 0;transform:scaleX(1.0071);will-change:transform;">Config.Ms</div><div style="position:absolute;left:516.59px;top:704.68px;font-size:24px;line-height:30px;color:#1a1a1a;font-weight:normal;white-space:nowrap;transform-origin:0 0;transform:scaleX(1.2800);will-change:transform;">i</div><svg style="position:absolute;left:596px;top:574px;" width="72" height="96" viewBox="0 0 72 96"><defs><linearGradient id="g85" x1="0" y1="0" x2="0" y2="1"><stop offset="0" stop-color="#fdd975"/><stop offset="1" stop-color="#fbc12d"/></linearGradient>
<linearGradient id="g86" x1="0" y1="0" x2="0" y2="1"><stop offset="0" stop-color="#e3a400"/><stop offset="1" stop-color="#cc8800"/></linearGradient></defs>
<path d="M0 0 H66 V48 L72 53 V84 H0 Z" fill="url(#g86)"/>
<path d="M0 0 L60 11 V59 L54 61 V96 L0 84 Z" fill="url(#g85)"/></svg><div style="position:absolute;left:618.06px;top:672.68px;font-size:24px;line-height:30px;color:#1a1a1a;font-weight:normal;white-space:nowrap;transform-origin:0 0;transform:scaleX(0.9851);will-change:transform;">Data</div><svg style="position:absolute;left:720px;top:574px;" width="72" height="96" viewBox="0 0 72 96"><defs><linearGradient id="g87" x1="0" y1="0" x2="0" y2="1"><stop offset="0" stop-color="#fdd975"/><stop offset="1" stop-color="#fbc12d"/></linearGradient>
<linearGradient id="g88" x1="0" y1="0" x2="0" y2="1"><stop offset="0" stop-color="#e3a400"/><stop offset="1" stop-color="#cc8800"/></linearGradient></defs>
<path d="M0 0 H66 V48 L72 53 V84 H0 Z" fill="url(#g88)"/>
<path d="M0 0 L60 11 V59 L54 61 V96 L0 84 Z" fill="url(#g87)"/></svg><div style="position:absolute;left:715.86px;top:672.68px;font-size:24px;line-height:30px;color:#1a1a1a;font-weight:normal;white-space:nowrap;transform-origin:0 0;transform:scaleX(1.0112);will-change:transform;">Documen</div><div style="position:absolute;left:735.89px;top:704.68px;font-size:24px;line-height:30px;color:#1a1a1a;font-weight:normal;white-space:nowrap;transform-origin:0 0;transform:scaleX(1.0005);will-change:transform;">ts and</div><div style="position:absolute;left:724.71px;top:736.68px;font-size:24px;line-height:30px;color:#1a1a1a;font-weight:normal;white-space:nowrap;transform-origin:0 0;transform:scaleX(0.9957);will-change:transform;">Settings</div><svg style="position:absolute;left:844px;top:574px;" width="72" height="96" viewBox="0 0 72 96"><defs><linearGradient id="g89" x1="0" y1="0" x2="0" y2="1"><stop offset="0" stop-color="#fdd975"/><stop offset="1" stop-color="#fbc12d"/></linearGradient>
<linearGradient id="g90" x1="0" y1="0" x2="0" y2="1"><stop offset="0" stop-color="#e3a400"/><stop offset="1" stop-color="#cc8800"/></linearGradient></defs>
<path d="M0 0 H66 V48 L72 53 V84 H0 Z" fill="url(#g90)"/>
<path d="M0 0 L60 11 V59 L54 61 V96 L0 84 Z" fill="url(#g89)"/></svg><div style="position:absolute;left:855.09px;top:672.68px;font-size:24px;line-height:30px;color:#1a1a1a;font-weight:normal;white-space:nowrap;transform-origin:0 0;transform:scaleX(0.9887);will-change:transform;">eclipse</div><svg style="position:absolute;left:968px;top:574px;" width="72" height="96" viewBox="0 0 72 96"><defs><linearGradient id="g91" x1="0" y1="0" x2="0" y2="1"><stop offset="0" stop-color="#fdd975"/><stop offset="1" stop-color="#fbc12d"/></linearGradient>
<linearGradient id="g92" x1="0" y1="0" x2="0" y2="1"><stop offset="0" stop-color="#e3a400"/><stop offset="1" stop-color="#cc8800"/></linearGradient></defs>
<path d="M0 0 H66 V48 L72 53 V84 H0 Z" fill="url(#g92)"/>
<path d="M0 0 L60 11 V59 L54 61 V96 L0 84 Z" fill="url(#g91)"/></svg><div style="position:absolute;left:993.86px;top:672.68px;font-size:24px;line-height:30px;color:#1a1a1a;font-weight:normal;white-space:nowrap;transform-origin:0 0;transform:scaleX(0.8825);will-change:transform;">ESD</div><svg style="position:absolute;left:1092px;top:574px;" width="72" height="96" viewBox="0 0 72 96"><defs><linearGradient id="g93" x1="0" y1="0" x2="0" y2="1"><stop offset="0" stop-color="#fdd975"/><stop offset="1" stop-color="#fbc12d"/></linearGradient>
<linearGradient id="g94" x1="0" y1="0" x2="0" y2="1"><stop offset="0" stop-color="#e3a400"/><stop offset="1" stop-color="#cc8800"/></linearGradient></defs>
<path d="M0 0 H66 V48 L72 53 V84 H0 Z" fill="url(#g94)"/>
<path d="M0 0 L60 11 V59 L54 61 V96 L0 84 Z" fill="url(#g93)"/></svg><div style="position:absolute;left:1086.56px;top:672.68px;font-size:24px;line-height:30px;color:#1a1a1a;font-weight:normal;white-space:nowrap;transform-origin:0 0;transform:scaleX(1.0067);will-change:transform;">found.000</div><svg style="position:absolute;left:1216px;top:574px;" width="72" height="96" viewBox="0 0 72 96"><defs><linearGradient id="g95" x1="0" y1="0" x2="0" y2="1"><stop offset="0" stop-color="#fdd975"/><stop offset="1" stop-color="#fbc12d"/></linearGradient>
<linearGradient id="g96" x1="0" y1="0" x2="0" y2="1"><stop offset="0" stop-color="#e3a400"/><stop offset="1" stop-color="#cc8800"/></linearGradient></defs>
<path d="M0 0 H66 V48 L72 53 V84 H0 Z" fill="url(#g96)"/>
<path d="M0 0 L60 11 V59 L54 61 V96 L0 84 Z" fill="url(#g95)"/></svg><div style="position:absolute;left:1211.71px;top:672.68px;font-size:24px;line-height:30px;color:#1a1a1a;font-weight:normal;white-space:nowrap;transform-origin:0 0;transform:scaleX(0.9871);will-change:transform;">found.001</div><svg style="position:absolute;left:1340px;top:574px;" width="72" height="96" viewBox="0 0 72 96"><defs><linearGradient id="g97" x1="0" y1="0" x2="0" y2="1"><stop offset="0" stop-color="#fdd975"/><stop offset="1" stop-color="#fbc12d"/></linearGradient>
<linearGradient id="g98" x1="0" y1="0" x2="0" y2="1"><stop offset="0" stop-color="#e3a400"/><stop offset="1" stop-color="#cc8800"/></linearGradient></defs>
<path d="M0 0 H66 V48 L72 53 V84 H0 Z" fill="url(#g98)"/>
<path d="M0 0 L60 11 V59 L54 61 V96 L0 84 Z" fill="url(#g97)"/></svg><div style="position:absolute;left:1363.32px;top:672.68px;font-size:24px;line-height:30px;color:#1a1a1a;font-weight:normal;white-space:nowrap;transform-origin:0 0;transform:scaleX(1.0736);will-change:transform;">Intel</div><svg style="position:absolute;left:472px;top:778px;" width="72" height="96" viewBox="0 0 72 96"><defs><linearGradient id="g99" x1="0" y1="0" x2="0" y2="1"><stop offset="0" stop-color="#fdd975"/><stop offset="1" stop-color="#fbc12d"/></linearGradient>
<linearGradient id="g100" x1="0" y1="0" x2="0" y2="1"><stop offset="0" stop-color="#e3a400"/><stop offset="1" stop-color="#cc8800"/></linearGradient></defs>
<path d="M0 0 H66 V48 L72 53 V84 H0 Z" fill="url(#g100)"/>
<path d="M0 0 L60 11 V59 L54 61 V96 L0 84 Z" fill="url(#g99)"/></svg><div style="position:absolute;left:493.92px;top:876.68px;font-size:24px;line-height:30px;color:#1a1a1a;font-weight:normal;white-space:nowrap;transform-origin:0 0;transform:scaleX(0.9816);will-change:transform;">Logs</div><svg style="position:absolute;left:596px;top:778px;" width="72" height="96" viewBox="0 0 72 96"><defs><linearGradient id="g101" x1="0" y1="0" x2="0" y2="1"><stop offset="0" stop-color="#fdd975"/><stop offset="1" stop-color="#fbc12d"/></linearGradient>
<linearGradient id="g102" x1="0" y1="0" x2="0" y2="1"><stop offset="0" stop-color="#e3a400"/><stop offset="1" stop-color="#cc8800"/></linearGradient></defs>
<path d="M0 0 H66 V48 L72 53 V84 H0 Z" fill="url(#g102)"/>
<path d="M0 0 L60 11 V59 L54 61 V96 L0 84 Z" fill="url(#g101)"/></svg><div style="position:absolute;left:590.71px;top:876.68px;font-size:24px;line-height:30px;color:#1a1a1a;font-weight:normal;white-space:nowrap;transform-origin:0 0;transform:scaleX(0.9592);will-change:transform;">MSOCach</div><svg style="position:absolute;left:720px;top:778px;" width="72" height="96" viewBox="0 0 72 96"><defs><linearGradient id="g103" x1="0" y1="0" x2="0" y2="1"><stop offset="0" stop-color="#fdd975"/><stop offset="1" stop-color="#fbc12d"/></linearGradient>
<linearGradient id="g104" x1="0" y1="0" x2="0" y2="1"><stop offset="0" stop-color="#e3a400"/><stop offset="1" stop-color="#cc8800"/></linearGradient></defs>
<path d="M0 0 H66 V48 L72 53 V84 H0 Z" fill="url(#g104)"/>
<path d="M0 0 L60 11 V59 L54 61 V96 L0 84 Z" fill="url(#g103)"/></svg><div style="position:absolute;left:727.24px;top:876.68px;font-size:24px;line-height:30px;color:#1a1a1a;font-weight:normal;white-space:nowrap;transform-origin:0 0;transform:scaleX(0.9949);will-change:transform;">NVIDIA</div><svg style="position:absolute;left:844px;top:778px;" width="72" height="96" viewBox="0 0 72 96"><defs><linearGradient id="g105" x1="0" y1="0" x2="0" y2="1"><stop offset="0" stop-color="#fdd975"/><stop offset="1" stop-color="#fbc12d"/></linearGradient>
<linearGradient id="g106" x1="0" y1="0" x2="0" y2="1"><stop offset="0" stop-color="#e3a400"/><stop offset="1" stop-color="#cc8800"/></linearGradient></defs>
<path d="M0 0 H66 V48 L72 53 V84 H0 Z" fill="url(#g106)"/>
<path d="M0 0 L60 11 V59 L54 61 V96 L0 84 Z" fill="url(#g105)"/></svg><div style="position:absolute;left:844.47px;top:876.68px;font-size:24px;line-height:30px;color:#1a1a1a;font-weight:normal;white-space:nowrap;transform-origin:0 0;transform:scaleX(0.9783);will-change:transform;">PerfLogs</div><svg style="position:absolute;left:968px;top:778px;" width="72" height="96" viewBox="0 0 72 96"><defs><linearGradient id="g107" x1="0" y1="0" x2="0" y2="1"><stop offset="0" stop-color="#fdd975"/><stop offset="1" stop-color="#fbc12d"/></linearGradient>
<linearGradient id="g108" x1="0" y1="0" x2="0" y2="1"><stop offset="0" stop-color="#e3a400"/><stop offset="1" stop-color="#cc8800"/></linearGradient></defs>
<path d="M0 0 H66 V48 L72 53 V84 H0 Z" fill="url(#g108)"/>
<path d="M0 0 L60 11 V59 L54 61 V96 L0 84 Z" fill="url(#g107)"/></svg><div style="position:absolute;left:969.52px;top:876.68px;font-size:24px;line-height:30px;color:#1a1a1a;font-weight:normal;white-space:nowrap;transform-origin:0 0;transform:scaleX(1.0059);will-change:transform;">Program</div><svg style="position:absolute;left:1092px;top:778px;" width="72" height="96" viewBox="0 0 72 96"><defs><linearGradient id="g109" x1="0" y1="0" x2="0" y2="1"><stop offset="0" stop-color="#fdd975"/><stop offset="1" stop-color="#fbc12d"/></linearGradient>
<linearGradient id="g110" x1="0" y1="0" x2="0" y2="1"><stop offset="0" stop-color="#e3a400"/><stop offset="1" stop-color="#cc8800"/></linearGradient></defs>
<path d="M0 0 H66 V48 L72 53 V84 H0 Z" fill="url(#g110)"/>
<path d="M0 0 L60 11 V59 L54 61 V96 L0 84 Z" fill="url(#g109)"/></svg><div style="position:absolute;left:1093.52px;top:876.68px;font-size:24px;line-height:30px;color:#1a1a1a;font-weight:normal;white-space:nowrap;transform-origin:0 0;transform:scaleX(1.0059);will-change:transform;">Program</div><svg style="position:absolute;left:1216px;top:778px;" width="72" height="96" viewBox="0 0 72 96"><defs><linearGradient id="g111" x1="0" y1="0" x2="0" y2="1"><stop offset="0" stop-color="#fdd975"/><stop offset="1" stop-color="#fbc12d"/></linearGradient>
<linearGradient id="g112" x1="0" y1="0" x2="0" y2="1"><stop offset="0" stop-color="#e3a400"/><stop offset="1" stop-color="#cc8800"/></linearGradient></defs>
<path d="M0 0 H66 V48 L72 53 V84 H0 Z" fill="url(#g112)"/>
<path d="M0 0 L60 11 V59 L54 61 V96 L0 84 Z" fill="url(#g111)"/></svg><div style="position:absolute;left:1217.52px;top:876.68px;font-size:24px;line-height:30px;color:#1a1a1a;font-weight:normal;white-space:nowrap;transform-origin:0 0;transform:scaleX(1.0059);will-change:transform;">Program</div><svg style="position:absolute;left:1340px;top:778px;" width="72" height="96" viewBox="0 0 72 96"><defs><linearGradient id="g113" x1="0" y1="0" x2="0" y2="1"><stop offset="0" stop-color="#fdd975"/><stop offset="1" stop-color="#fbc12d"/></linearGradient>
<linearGradient id="g114" x1="0" y1="0" x2="0" y2="1"><stop offset="0" stop-color="#e3a400"/><stop offset="1" stop-color="#cc8800"/></linearGradient></defs>
<path d="M0 0 H66 V48 L72 53 V84 H0 Z" fill="url(#g114)"/>
<path d="M0 0 L60 11 V59 L54 61 V96 L0 84 Z" fill="url(#g113)"/></svg><div style="position:absolute;left:1339.03px;top:876.68px;font-size:24px;line-height:30px;color:#1a1a1a;font-weight:normal;white-space:nowrap;transform-origin:0 0;transform:scaleX(0.9481);will-change:transform;">Recovery</div><div style="position:absolute;left:1562px;top:364px;width:36px;height:536px;background:#f0f0f0;"></div><svg style="position:absolute;left:1572px;top:378px;" width="16" height="8" viewBox="0 0 16 8"><path d="M0 8 L8 0 L16 8 Z" fill="#a0a0a0"/></svg><div style="position:absolute;left:1572px;top:400px;width:16px;height:482px;background:#c2c2c2;"></div></div><div style="position:absolute;left:0px;top:900px;width:1600px;height:900px;overflow:hidden;background:#8a8a8a"><div style="position:absolute;left:2px;top:2px;width:1596px;height:75px;background:linear-gradient(#cccccc 0px, #cccccc 67px, #b8b8b8 75px);"></div><div style="position:absolute;left:20.84px;top:22.76px;font-size:31px;line-height:39px;color:#000000;font-weight:normal;white-space:nowrap;transform-origin:0 0;transform:scaleX(0.9662);will-change:transform;">Plugins</div><svg style="position:absolute;left:1547px;top:27px;" width="26" height="26" viewBox="0 0 26 26"><path d="M1 1 L25 25 M25 1 L1 25" stroke="#000000" stroke-width="1.6"/></svg><div style="position:absolute;left:2px;top:77px;width:1596px;height:823px;background:#ffffff;"></div><div style="position:absolute;left:12px;top:88px;width:446px;height:916px;border:2px solid #828282;background:#ffffff;"></div><div style="position:absolute;left:25px;top:100px;width:425px;height:50px;background:#a5d8f1;"></div><div style="position:absolute;left:78.99px;top:105.61px;font-size:30px;line-height:38px;color:#000000;font-weight:normal;white-space:nowrap;transform-origin:0 0;transform:scaleX(1.0216);will-change:transform;">Dropbox</div><div style="position:absolute;left:400px;top:103px;width:41px;height:40px;border:2px solid #828282;background:transparent;"></div><div style="position:absolute;left:79.17px;top:155.60px;font-size:30px;line-height:38px;color:#000000;font-weight:normal;white-space:nowrap;transform-origin:0 0;transform:scaleX(0.9458);will-change:transform;">File System</div><div style="position:absolute;left:400px;top:153px;width:41px;height:40px;border:2px solid #828282;background:transparent;"></div><div style="position:absolute;left:79.38px;top:205.60px;font-size:30px;line-height:38px;color:#000000;font-weight:normal;white-space:nowrap;transform-origin:0 0;transform:scaleX(0.8619);will-change:transform;">FTP/FTPS</div><div style="position:absolute;left:400px;top:203px;width:41px;height:40px;border:2px solid #828282;background:transparent;"></div><div style="position:absolute;left:80.00px;top:255.60px;font-size:30px;line-height:38px;color:#000000;font-weight:normal;white-space:nowrap;transform-origin:0 0;transform:scaleX(0.9957);will-change:transform;">Google Drive</div><div style="position:absolute;left:400px;top:253px;width:41px;height:40px;border:2px solid #828282;background:transparent;"></div><div style="position:absolute;left:81.44px;top:305.61px;font-size:30px;line-height:38px;color:#000000;font-weight:normal;white-space:nowrap;transform-origin:0 0;transform:scaleX(0.9531);will-change:transform;">Amazon S3</div><div style="position:absolute;left:400px;top:303px;width:41px;height:40px;border:2px solid #828282;background:transparent;"></div><svg style="position:absolute;left:35px;top:110px;" width="30" height="29" viewBox="0 0 42.4 40"><g fill="#1f88e6"><path d="M12.5 0L0 8.1l8.7 7L21.2 7.2z"/><path d="M0 21.9l12.5 8.2 8.7-7.3-12.6-7.8z"/>
<path d="M21.2 22.8l8.8 7.3 12.4-8.1-8.6-6.9z"/><path d="M42.4 8.1L30 0l-8.8 7.3 12.6 7.8z"/>
<path d="M21.3 24.4l-8.8 7.3-3.7-2.5v2.8l12.5 7.5 12.5-7.5v-2.8l-3.8 2.5z"/></g></svg><svg style="position:absolute;left:35px;top:160px;" width="30" height="29" viewBox="0 0 24 24"><rect x="1" y="1" width="22" height="16" fill="#bfe0fb" stroke="#7e8f9c" stroke-width="2"/>
<rect x="10" y="18" width="4" height="3" fill="#58656e"/><rect x="5" y="21" width="14" height="3" fill="#4a565e"/></svg><svg style="position:absolute;left:30px;top:210px;" width="40" height="30" viewBox="0 0 32 24"><path d="M0 2 H10 L12 4 H26 V24 H0 Z" fill="#fbc12d"/>
<path d="M0 6 H26 V24 H0 Z" fill="#fdc72f"/>
<path d="M21 0 H32 V10 Z" fill="#8e3fb8"/><path d="M23 1 L31 9 M26 0 L32 6" stroke="#d07be8" stroke-width="1.5"/></svg><svg style="position:absolute;left:32px;top:260px;" width="36" height="30" viewBox="0 0 28 24"><path d="M9 0 H19 L28 16 H18 Z" fill="#f5c518"/>
<path d="M9 0 L14 8 L5 24 L0 16 Z" fill="#3aa757"/>
<path d="M5 24 L10 16 H28 L23 24 Z" fill="#2a7be4"/></svg><svg style="position:absolute;left:32px;top:312px;" width="36" height="26" viewBox="0 0 28 20"><g fill="#f39c3e"><rect x="14" y="0" width="14" height="6" rx="2"/><rect x="0" y="6" width="16" height="6" rx="2"/>
<rect x="6" y="12" width="6" height="8" rx="2"/><rect x="12" y="4" width="4" height="6"/></g>
<rect x="18" y="14" width="10" height="6" fill="#8a8a8a"/></svg><svg style="position:absolute;left:482px;top:120px;" width="61" height="57" viewBox="0 0 42.4 40"><g fill="#1f88e6"><path d="M12.5 0L0 8.1l8.7 7L21.2 7.2z"/><path d="M0 21.9l12.5 8.2 8.7-7.3-12.6-7.8z"/>
<path d="M21.2 22.8l8.8 7.3 12.4-8.1-8.6-6.9z"/><path d="M42.4 8.1L30 0l-8.8 7.3 12.6 7.8z"/>
<path d="M21.3 24.4l-8.8 7.3-3.7-2.5v2.8l12.5 7.5 12.5-7.5v-2.8l-3.8 2.5z"/></g></svg><div style="position:absolute;left:552.27px;top:90.61px;font-size:30px;line-height:38px;color:#000000;font-weight:bold;white-space:nowrap;transform-origin:0 0;transform:scaleX(1.0132);will-change:transform;">Dropbox</div><div style="position:absolute;left:553.37px;top:129.60px;font-size:30px;line-height:38px;color:#000000;font-weight:normal;white-space:nowrap;transform-origin:0 0;transform:scaleX(1.0001);will-change:transform;">View your Dropbox accounts, inspect their contents and play with directories</div><div style="position:absolute;left:552.42px;top:169.60px;font-size:30px;line-height:38px;color:#000000;font-weight:normal;white-space:nowrap;transform-origin:0 0;transform:scaleX(1.0281);will-change:transform;">&amp; files stored within them.</div><div style="position:absolute;left:511.53px;top:234.60px;font-size:30px;line-height:38px;color:#000000;font-weight:normal;white-space:nowrap;transform-origin:0 0;transform:scaleX(1.0028);will-change:transform;">Manage your registered Dropbox accounts.</div><div style="position:absolute;left:503px;top:278px;width:815px;height:445px;border:2px solid #828282;background:#ffffff;"></div><div style="position:absolute;left:1343px;top:283px;width:195px;height:60px;border:2px solid #a4a4a4;background:#f4f4f4;"></div><div style="position:absolute;left:1414.94px;top:298.61px;font-size:30px;line-height:38px;color:#000000;font-weight:normal;white-space:nowrap;transform-origin:0 0;transform:scaleX(1.0314);will-change:transform;">Add</div><div style="position:absolute;left:1343px;top:358px;width:195px;height:60px;border:2px solid #d2d2d2;background:#fafafa;"></div><div style="position:absolute;left:1386.09px;top:372.61px;font-size:30px;line-height:38px;color:#9a9a9a;font-weight:normal;white-space:nowrap;transform-origin:0 0;transform:scaleX(0.9776);will-change:transform;">Remove</div></div><div style="position:absolute;left:1600px;top:900px;width:1600px;height:900px;overflow:hidden;background:#505050"><div style="position:absolute;left:2px;top:2px;width:1596px;height:75px;background:linear-gradient(#2b2b2b 0px, #2b2b2b 67px, #2f2f2f 75px);"></div><div style="position:absolute;left:20.84px;top:22.76px;font-size:31px;line-height:39px;color:#ffffff;font-weight:normal;white-space:nowrap;transform-origin:0 0;transform:scaleX(0.9662);will-change:transform;">Plugins</div><svg style="position:absolute;left:1547px;top:27px;" width="26" height="26" viewBox="0 0 26 26"><path d="M1 1 L25 25 M25 1 L1 25" stroke="#ffffff" stroke-width="1.6"/></svg><div style="position:absolute;left:2px;top:77px;width:1596px;height:823px;background:#1a1a1a;"></div><div style="position:absolute;left:12px;top:88px;width:446px;height:916px;border:2px solid #888888;background:#282828;"></div><div style="position:absolute;left:25px;top:100px;width:425px;height:50px;background:#1e5775;"></div><div style="position:absolute;left:78.99px;top:105.61px;font-size:30px;line-height:38px;color:#f2f2f2;font-weight:normal;white-space:nowrap;transform-origin:0 0;transform:scaleX(1.0216);will-change:transform;">Dropbox</div><div style="position:absolute;left:400px;top:103px;width:41px;height:40px;border:2px solid #888888;background:transparent;"></div><div style="position:absolute;left:79.17px;top:155.60px;font-size:30px;line-height:38px;color:#f2f2f2;font-weight:normal;white-space:nowrap;transform-origin:0 0;transform:scaleX(0.9458);will-change:transform;">File System</div><div style="position:absolute;left:400px;top:153px;width:41px;height:40px;border:2px solid #888888;background:transparent;"></div><div style="position:absolute;left:79.38px;top:205.60px;font-size:30px;line-height:38px;color:#f2f2f2;font-weight:normal;white-space:nowrap;transform-origin:0 0;transform:scaleX(0.8619);will-change:transform;">FTP/FTPS</div><div style="position:absolute;left:400px;top:203px;width:41px;height:40px;border:2px solid #888888;background:transparent;"></div><div style="position:absolute;left:80.00px;top:255.60px;font-size:30px;line-height:38px;color:#f2f2f2;font-weight:normal;white-space:nowrap;transform-origin:0 0;transform:scaleX(0.9957);will-change:transform;">Google Drive</div><div style="position:absolute;left:400px;top:253px;width:41px;height:40px;border:2px solid #888888;background:transparent;"></div><div style="position:absolute;left:81.44px;top:305.61px;font-size:30px;line-height:38px;color:#f2f2f2;font-weight:normal;white-space:nowrap;transform-origin:0 0;transform:scaleX(0.9531);will-change:transform;">Amazon S3</div><div style="position:absolute;left:400px;top:303px;width:41px;height:40px;border:2px solid #888888;background:transparent;"></div><svg style="position:absolute;left:35px;top:110px;" width="30" height="29" viewBox="0 0 42.4 40"><g fill="#1f88e6"><path d="M12.5 0L0 8.1l8.7 7L21.2 7.2z"/><path d="M0 21.9l12.5 8.2 8.7-7.3-12.6-7.8z"/>
<path d="M21.2 22.8l8.8 7.3 12.4-8.1-8.6-6.9z"/><path d="M42.4 8.1L30 0l-8.8 7.3 12.6 7.8z"/>
<path d="M21.3 24.4l-8.8 7.3-3.7-2.5v2.8l12.5 7.5 12.5-7.5v-2.8l-3.8 2.5z"/></g></svg><svg style="position:absolute;left:35px;top:160px;" width="30" height="29" viewBox="0 0 24 24"><rect x="1" y="1" width="22" height="16" fill="#bfe0fb" stroke="#7e8f9c" stroke-width="2"/>
<rect x="10" y="18" width="4" height="3" fill="#58656e"/><rect x="5" y="21" width="14" height="3" fill="#4a565e"/></svg><svg style="position:absolute;left:30px;top:210px;" width="40" height="30" viewBox="0 0 32 24"><path d="M0 2 H10 L12 4 H26 V24 H0 Z" fill="#fbc12d"/>
<path d="M0 6 H26 V24 H0 Z" fill="#fdc72f"/>
<path d="M21 0 H32 V10 Z" fill="#8e3fb8"/><path d="M23 1 L31 9 M26 0 L32 6" stroke="#d07be8" stroke-width="1.5"/></svg><svg style="position:absolute;left:32px;top:260px;" width="36" height="30" viewBox="0 0 28 24"><path d="M9 0 H19 L28 16 H18 Z" fill="#f5c518"/>
<path d="M9 0 L14 8 L5 24 L0 16 Z" fill="#3aa757"/>
<path d="M5 24 L10 16 H28 L23 24 Z" fill="#2a7be4"/></svg><svg style="position:absolute;left:32px;top:312px;" width="36" height="26" viewBox="0 0 28 20"><g fill="#d5801c"><rect x="14" y="0" width="14" height="6" rx="2"/><rect x="0" y="6" width="16" height="6" rx="2"/>
<rect x="6" y="12" width="6" height="8" rx="2"/><rect x="12" y="4" width="4" height="6"/></g>
<rect x="18" y="14" width="10" height="6" fill="#252525"/></svg><svg style="position:absolute;left:482px;top:120px;" width="61" height="57" viewBox="0 0 42.4 40"><g fill="#1f88e6"><path d="M12.5 0L0 8.1l8.7 7L21.2 7.2z"/><path d="M0 21.9l12.5 8.2 8.7-7.3-12.6-7.8z"/>
<path d="M21.2 22.8l8.8 7.3 12.4-8.1-8.6-6.9z"/><path d="M42.4 8.1L30 0l-8.8 7.3 12.6 7.8z"/>
<path d="M21.3 24.4l-8.8 7.3-3.7-2.5v2.8l12.5 7.5 12.5-7.5v-2.8l-3.8 2.5z"/></g></svg><div style="position:absolute;left:552.27px;top:90.61px;font-size:30px;line-height:38px;color:#f2f2f2;font-weight:bold;white-space:nowrap;transform-origin:0 0;transform:scaleX(1.0132);will-change:transform;">Dropbox</div><div style="position:absolute;left:553.37px;top:129.60px;font-size:30px;line-height:38px;color:#f2f2f2;font-weight:normal;white-space:nowrap;transform-origin:0 0;transform:scaleX(1.0001);will-change:transform;">View your Dropbox accounts, inspect their contents and play with directories</div><div style="position:absolute;left:552.42px;top:169.60px;font-size:30px;line-height:38px;color:#f2f2f2;font-weight:normal;white-space:nowrap;transform-origin:0 0;transform:scaleX(1.0281);will-change:transform;">&amp; files stored within them.</div><div style="position:absolute;left:511.53px;top:234.60px;font-size:30px;line-height:38px;color:#f2f2f2;font-weight:normal;white-space:nowrap;transform-origin:0 0;transform:scaleX(1.0028);will-change:transform;">Manage your registered Dropbox accounts.</div><div style="position:absolute;left:503px;top:278px;width:815px;height:445px;border:2px solid #888888;background:#282828;"></div><div style="position:absolute;left:1343px;top:283px;width:195px;height:60px;border:2px solid #4d4d4d;background:#4d4d4d;"></div><div style="position:absolute;left:1414.94px;top:298.61px;font-size:30px;line-height:38px;color:#ffffff;font-weight:normal;white-space:nowrap;transform-origin:0 0;transform:scaleX(1.0314);will-change:transform;">Add</div><div style="position:absolute;left:1343px;top:358px;width:195px;height:60px;border:2px solid #333333;background:#333333;"></div><div style="position:absolute;left:1386.09px;top:372.61px;font-size:30px;line-height:38px;color:#8a8a8a;font-weight:normal;white-space:nowrap;transform-origin:0 0;transform:scaleX(0.9776);will-change:transform;">Remove</div></div>
</body></html>
